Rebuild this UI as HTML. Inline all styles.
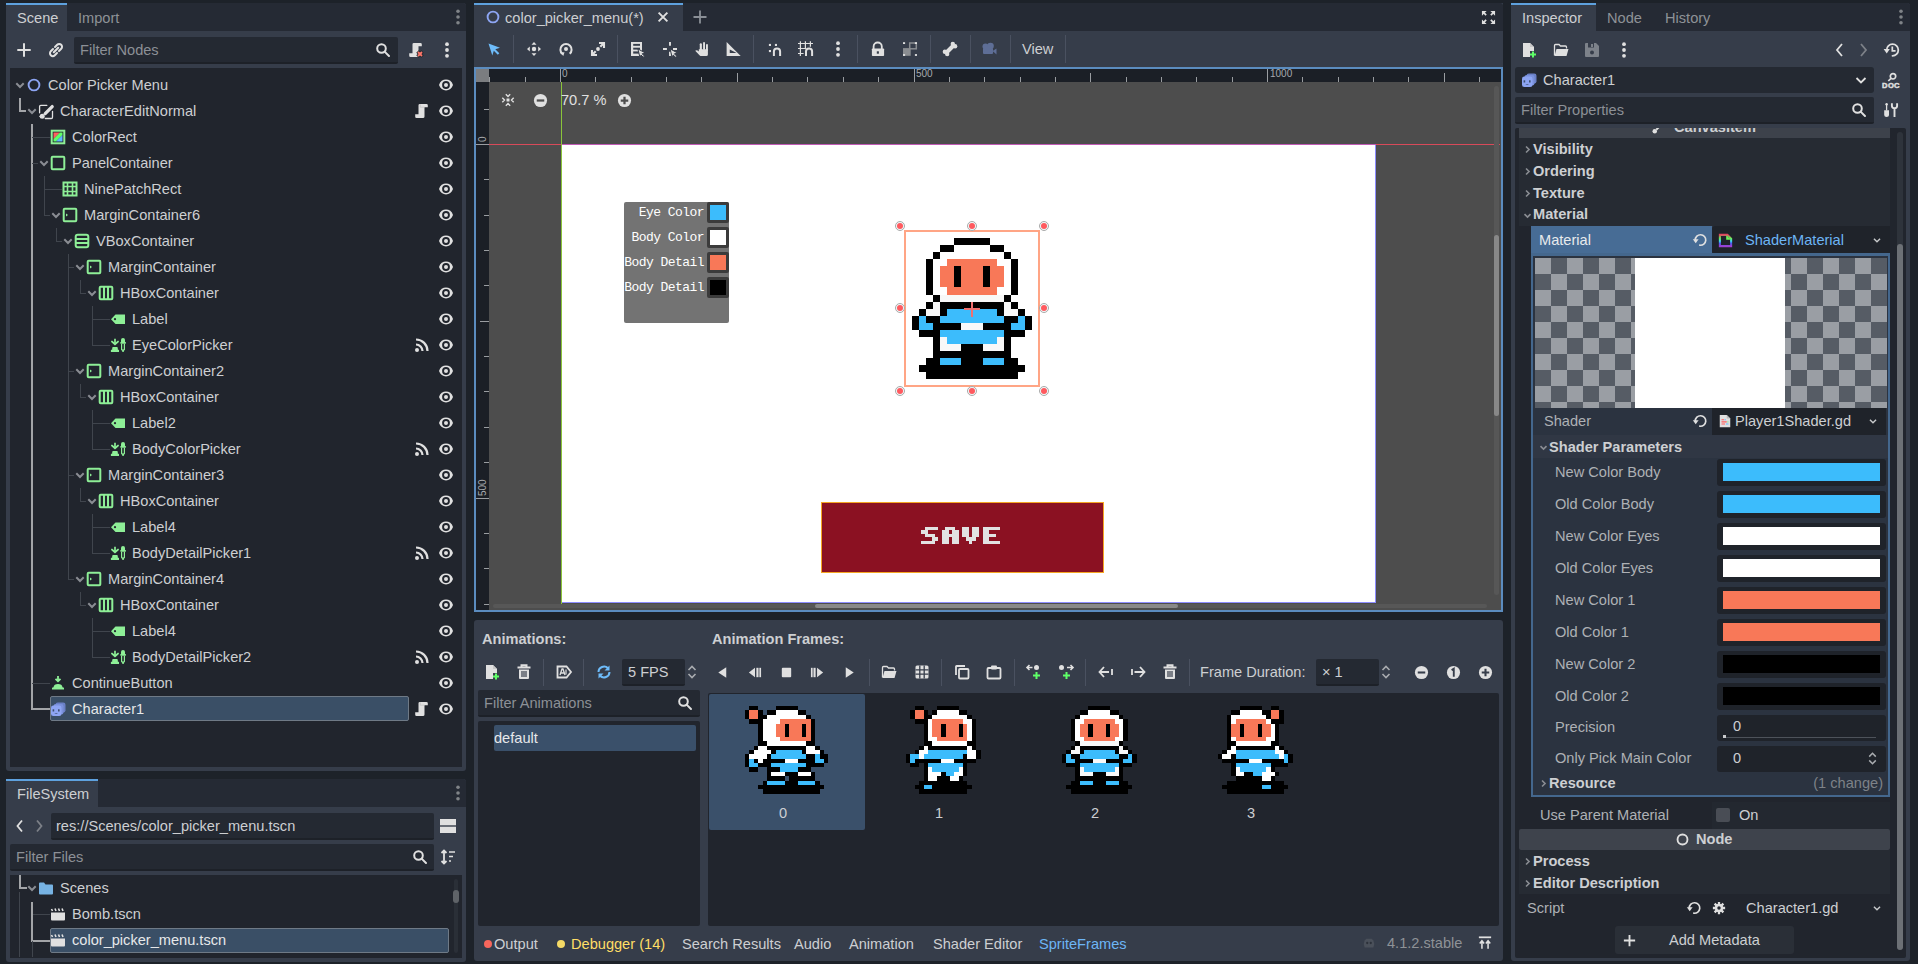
<!DOCTYPE html>
<html><head><meta charset="utf-8"><style>
html,body{margin:0;padding:0;}
body{width:1918px;height:964px;overflow:hidden;background:#1d2229;position:relative;font-family:"Liberation Sans", sans-serif;}
.a{position:absolute;}
.t{white-space:nowrap;}
svg{overflow:visible;}
</style></head><body>
<div class="a" style="left:6px;top:3px;width:460px;height:768px;background:#363d4a;border-radius:3px;"></div><div class="a" style="left:6px;top:3px;width:460px;height:28px;background:#252a34;border-radius:3px 3px 0 0;"></div><div class="a" style="left:6px;top:3px;width:61px;height:28px;background:#363d4a;"></div><div class="a" style="left:6px;top:3px;width:61px;height:2px;background:#5ea1de;"></div><div class="a t" style="top:8.0px;height:20px;line-height:20px;font-size:14.6px;color:#cdcfd2;left:17px;">Scene</div><div class="a t" style="top:8.0px;height:20px;line-height:20px;font-size:14.6px;color:#8e9297;left:78px;">Import</div><div class="a" style="left:10px;top:68px;width:452px;height:699px;background:#21252d;"></div><div class="a" style="left:6px;top:779px;width:460px;height:183px;background:#363d4a;border-radius:3px;"></div><div class="a" style="left:6px;top:779px;width:460px;height:28px;background:#252a34;border-radius:3px 3px 0 0;"></div><div class="a" style="left:6px;top:779px;width:92px;height:28px;background:#363d4a;"></div><div class="a" style="left:6px;top:779px;width:92px;height:2px;background:#5ea1de;"></div><div class="a t" style="top:784.0px;height:20px;line-height:20px;font-size:14.6px;color:#cdcfd2;left:17px;">FileSystem</div><div class="a" style="left:10px;top:875px;width:452px;height:83px;background:#21252d;"></div><div class="a" style="left:474px;top:3px;width:1029px;height:64px;background:#363d4a;"></div><div class="a" style="left:474px;top:3px;width:1029px;height:28px;background:#252a34;border-radius:3px 3px 0 0;"></div><div class="a" style="left:474px;top:3px;width:209px;height:28px;background:#363d4a;"></div><div class="a" style="left:474px;top:3px;width:209px;height:2px;background:#5ea1de;"></div><div class="a t" style="top:8.0px;height:20px;line-height:20px;font-size:14.6px;color:#cdcfd2;left:505px;">color_picker_menu(*)</div><div class="a" style="left:474px;top:67px;width:1029px;height:545px;background:#4f5e73;"></div><div class="a" style="left:476px;top:69px;width:1025px;height:541px;background:#4d4d4d;"></div><div class="a" style="left:474px;top:620px;width:1029px;height:341px;background:#363d4a;border-radius:3px;"></div><div class="a" style="left:1511px;top:3px;width:399px;height:958px;background:#363d4a;border-radius:3px;"></div><div class="a" style="left:1511px;top:3px;width:399px;height:28px;background:#252a34;border-radius:3px 3px 0 0;"></div><div class="a" style="left:1511px;top:3px;width:85px;height:28px;background:#363d4a;"></div><div class="a" style="left:1511px;top:3px;width:85px;height:2px;background:#5ea1de;"></div><div class="a t" style="top:8.0px;height:20px;line-height:20px;font-size:14.6px;color:#cdcfd2;left:1522px;">Inspector</div><div class="a t" style="top:8.0px;height:20px;line-height:20px;font-size:14.6px;color:#8e9297;left:1607px;">Node</div><div class="a t" style="top:8.0px;height:20px;line-height:20px;font-size:14.6px;color:#8e9297;left:1665px;">History</div><div class="a" style="left:50px;top:696px;width:359px;height:25px;background:#3a4f66;border:1px solid #6f7a86;box-sizing:border-box;border-radius:2px;"></div><div class="a" style="left:19px;top:98px;width:2px;height:14px;background:#a3a5a8;"></div><div class="a" style="left:20px;top:110px;width:6px;height:2px;background:#a3a5a8;"></div><div class="a" style="left:31px;top:124px;width:2px;height:586px;background:#a3a5a8;"></div><div class="a" style="left:32px;top:137px;width:18px;height:1px;background:#40454d;"></div><div class="a" style="left:32px;top:163px;width:6px;height:1px;background:#40454d;"></div><div class="a" style="left:32px;top:683px;width:18px;height:1px;background:#40454d;"></div><div class="a" style="left:32px;top:708px;width:18px;height:2px;background:#a3a5a8;"></div><div class="a" style="left:44px;top:176px;width:1px;height:40px;background:#40454d;"></div><div class="a" style="left:44px;top:189px;width:18px;height:1px;background:#40454d;"></div><div class="a" style="left:44px;top:215px;width:6px;height:1px;background:#40454d;"></div><div class="a" style="left:56px;top:228px;width:1px;height:14px;background:#40454d;"></div><div class="a" style="left:56px;top:241px;width:6px;height:1px;background:#40454d;"></div><div class="a" style="left:68px;top:254px;width:1px;height:326px;background:#40454d;"></div><div class="a" style="left:68px;top:267px;width:6px;height:1px;background:#40454d;"></div><div class="a" style="left:68px;top:371px;width:6px;height:1px;background:#40454d;"></div><div class="a" style="left:68px;top:475px;width:6px;height:1px;background:#40454d;"></div><div class="a" style="left:68px;top:579px;width:6px;height:1px;background:#40454d;"></div><div class="a" style="left:80px;top:280px;width:1px;height:14px;background:#40454d;"></div><div class="a" style="left:80px;top:293px;width:6px;height:1px;background:#40454d;"></div><div class="a" style="left:92px;top:306px;width:1px;height:40px;background:#40454d;"></div><div class="a" style="left:92px;top:319px;width:18px;height:1px;background:#40454d;"></div><div class="a" style="left:92px;top:345px;width:18px;height:1px;background:#40454d;"></div><div class="a" style="left:80px;top:384px;width:1px;height:14px;background:#40454d;"></div><div class="a" style="left:80px;top:397px;width:6px;height:1px;background:#40454d;"></div><div class="a" style="left:92px;top:410px;width:1px;height:40px;background:#40454d;"></div><div class="a" style="left:92px;top:423px;width:18px;height:1px;background:#40454d;"></div><div class="a" style="left:92px;top:449px;width:18px;height:1px;background:#40454d;"></div><div class="a" style="left:80px;top:488px;width:1px;height:14px;background:#40454d;"></div><div class="a" style="left:80px;top:501px;width:6px;height:1px;background:#40454d;"></div><div class="a" style="left:92px;top:514px;width:1px;height:40px;background:#40454d;"></div><div class="a" style="left:92px;top:527px;width:18px;height:1px;background:#40454d;"></div><div class="a" style="left:92px;top:553px;width:18px;height:1px;background:#40454d;"></div><div class="a" style="left:80px;top:592px;width:1px;height:14px;background:#40454d;"></div><div class="a" style="left:80px;top:605px;width:6px;height:1px;background:#40454d;"></div><div class="a" style="left:92px;top:618px;width:1px;height:40px;background:#40454d;"></div><div class="a" style="left:92px;top:631px;width:18px;height:1px;background:#40454d;"></div><div class="a" style="left:92px;top:657px;width:18px;height:1px;background:#40454d;"></div><svg class="a" style="left:12.0px;top:77.0px;" width="16" height="16" viewBox="0 0 16 16"><path d="M4.3 6.3L8 10L11.7 6.3" fill="none" stroke="#8a8d93" stroke-width="2"/></svg><svg class="a" style="left:26.0px;top:77.0px;" width="16" height="16" viewBox="0 0 16 16"><circle cx="8" cy="8" r="5.4" fill="none" stroke="#8da5f3" stroke-width="1.9"/></svg><div class="a t" style="top:75.0px;height:20px;line-height:20px;font-size:14.6px;color:#cdcfd2;left:48px;">Color Picker Menu</div><svg class="a" style="left:438.0px;top:77.0px;" width="16" height="16" viewBox="0 0 16 16"><path d="M1 8C3 0.8 13 0.8 15 8C13 15.2 3 15.2 1 8Z" fill="#e0e0e0"/><circle cx="8" cy="8" r="3.9" fill="#21252d"/><circle cx="8" cy="8" r="2" fill="#e0e0e0"/></svg><svg class="a" style="left:24.0px;top:103.0px;" width="16" height="16" viewBox="0 0 16 16"><path d="M4.3 6.3L8 10L11.7 6.3" fill="none" stroke="#8a8d93" stroke-width="2"/></svg><svg class="a" style="left:38.0px;top:103.0px;" width="16" height="16" viewBox="0 0 16 16"><g fill="none" stroke="#e0e0e0" stroke-width="1.3" stroke-linecap="round"><path d="M1.6 9.8V3.6Q1.6 2.4 2.8 2.4H8.8M14.5 8.3V14.3Q14.5 15.5 13.3 15.5H7.3"/></g><path d="M14.2 3.6L7.2 10.6" stroke="#e0e0e0" stroke-width="3.3" stroke-linecap="round"/><circle cx="4.2" cy="13.2" r="2.5" fill="#e0e0e0"/><path d="M1 13.5L3 12L3.5 15Z" fill="#e0e0e0"/></svg><div class="a t" style="top:101.0px;height:20px;line-height:20px;font-size:14.6px;color:#cdcfd2;left:60px;">CharacterEditNormal</div><svg class="a" style="left:438.0px;top:103.0px;" width="16" height="16" viewBox="0 0 16 16"><path d="M1 8C3 0.8 13 0.8 15 8C13 15.2 3 15.2 1 8Z" fill="#e0e0e0"/><circle cx="8" cy="8" r="3.9" fill="#21252d"/><circle cx="8" cy="8" r="2" fill="#e0e0e0"/></svg><svg class="a" style="left:414.0px;top:103.0px;" width="16" height="16" viewBox="0 0 16 16"><path d="M4.5 2.2Q4.5 1 5.8 1H12.5Q13.8 1 13.8 2.3V4.2H10.5V13.5Q10.5 15 9 15H2.5Q1.2 15 1.2 13.7V11.3H4.5Z" fill="#e0e0e0"/><path d="M6.3 1.3V4.2H10.3" fill="none" stroke="#b8b8b8" stroke-width="0.6"/></svg><svg class="a" style="left:50.0px;top:129.0px;" width="16" height="16" viewBox="0 0 16 16"><rect x="1.7" y="1.7" width="12.6" height="12.6" fill="none" stroke="#8eef97" stroke-width="2"/><path d="M3.5 3.5H10L3.5 10Z" fill="#ff5f5f"/><path d="M10 3.5H12.5V6L6 12.5H3.5V10Z" fill="#5fff68"/><path d="M12.5 6V12.5H6Z" fill="#5fb8ff"/></svg><div class="a t" style="top:127.0px;height:20px;line-height:20px;font-size:14.6px;color:#cdcfd2;left:72px;">ColorRect</div><svg class="a" style="left:438.0px;top:129.0px;" width="16" height="16" viewBox="0 0 16 16"><path d="M1 8C3 0.8 13 0.8 15 8C13 15.2 3 15.2 1 8Z" fill="#e0e0e0"/><circle cx="8" cy="8" r="3.9" fill="#21252d"/><circle cx="8" cy="8" r="2" fill="#e0e0e0"/></svg><svg class="a" style="left:36.0px;top:155.0px;" width="16" height="16" viewBox="0 0 16 16"><path d="M4.3 6.3L8 10L11.7 6.3" fill="none" stroke="#8a8d93" stroke-width="2"/></svg><svg class="a" style="left:50.0px;top:155.0px;" width="16" height="16" viewBox="0 0 16 16"><rect x="1.7" y="1.7" width="12.6" height="12.6" rx="1" fill="none" stroke="#8eef97" stroke-width="2"/></svg><div class="a t" style="top:153.0px;height:20px;line-height:20px;font-size:14.6px;color:#cdcfd2;left:72px;">PanelContainer</div><svg class="a" style="left:438.0px;top:155.0px;" width="16" height="16" viewBox="0 0 16 16"><path d="M1 8C3 0.8 13 0.8 15 8C13 15.2 3 15.2 1 8Z" fill="#e0e0e0"/><circle cx="8" cy="8" r="3.9" fill="#21252d"/><circle cx="8" cy="8" r="2" fill="#e0e0e0"/></svg><svg class="a" style="left:62.0px;top:181.0px;" width="16" height="16" viewBox="0 0 16 16"><rect x="1.5" y="1.5" width="13" height="13" fill="none" stroke="#8eef97" stroke-width="2"/><path d="M5.5 1.5V14.5M10.5 1.5V14.5M1.5 5.5H14.5M1.5 10.5H14.5" stroke="#8eef97" stroke-width="1.6"/></svg><div class="a t" style="top:179.0px;height:20px;line-height:20px;font-size:14.6px;color:#cdcfd2;left:84px;">NinePatchRect</div><svg class="a" style="left:438.0px;top:181.0px;" width="16" height="16" viewBox="0 0 16 16"><path d="M1 8C3 0.8 13 0.8 15 8C13 15.2 3 15.2 1 8Z" fill="#e0e0e0"/><circle cx="8" cy="8" r="3.9" fill="#21252d"/><circle cx="8" cy="8" r="2" fill="#e0e0e0"/></svg><svg class="a" style="left:48.0px;top:207.0px;" width="16" height="16" viewBox="0 0 16 16"><path d="M4.3 6.3L8 10L11.7 6.3" fill="none" stroke="#8a8d93" stroke-width="2"/></svg><svg class="a" style="left:62.0px;top:207.0px;" width="16" height="16" viewBox="0 0 16 16"><rect x="1.7" y="1.7" width="12.6" height="12.6" rx="1" fill="none" stroke="#8eef97" stroke-width="2"/><path d="M4 6.5L6 8L4 9.5Z" fill="#8eef97"/></svg><div class="a t" style="top:205.0px;height:20px;line-height:20px;font-size:14.6px;color:#cdcfd2;left:84px;">MarginContainer6</div><svg class="a" style="left:438.0px;top:207.0px;" width="16" height="16" viewBox="0 0 16 16"><path d="M1 8C3 0.8 13 0.8 15 8C13 15.2 3 15.2 1 8Z" fill="#e0e0e0"/><circle cx="8" cy="8" r="3.9" fill="#21252d"/><circle cx="8" cy="8" r="2" fill="#e0e0e0"/></svg><svg class="a" style="left:60.0px;top:233.0px;" width="16" height="16" viewBox="0 0 16 16"><path d="M4.3 6.3L8 10L11.7 6.3" fill="none" stroke="#8a8d93" stroke-width="2"/></svg><svg class="a" style="left:74.0px;top:233.0px;" width="16" height="16" viewBox="0 0 16 16"><rect x="1.7" y="1.7" width="12.6" height="12.6" rx="2" fill="none" stroke="#8eef97" stroke-width="2"/><path d="M1.7 6H14.3M1.7 10H14.3" stroke="#8eef97" stroke-width="2"/></svg><div class="a t" style="top:231.0px;height:20px;line-height:20px;font-size:14.6px;color:#cdcfd2;left:96px;">VBoxContainer</div><svg class="a" style="left:438.0px;top:233.0px;" width="16" height="16" viewBox="0 0 16 16"><path d="M1 8C3 0.8 13 0.8 15 8C13 15.2 3 15.2 1 8Z" fill="#e0e0e0"/><circle cx="8" cy="8" r="3.9" fill="#21252d"/><circle cx="8" cy="8" r="2" fill="#e0e0e0"/></svg><svg class="a" style="left:72.0px;top:259.0px;" width="16" height="16" viewBox="0 0 16 16"><path d="M4.3 6.3L8 10L11.7 6.3" fill="none" stroke="#8a8d93" stroke-width="2"/></svg><svg class="a" style="left:86.0px;top:259.0px;" width="16" height="16" viewBox="0 0 16 16"><rect x="1.7" y="1.7" width="12.6" height="12.6" rx="1" fill="none" stroke="#8eef97" stroke-width="2"/><path d="M4 6.5L6 8L4 9.5Z" fill="#8eef97"/></svg><div class="a t" style="top:257.0px;height:20px;line-height:20px;font-size:14.6px;color:#cdcfd2;left:108px;">MarginContainer</div><svg class="a" style="left:438.0px;top:259.0px;" width="16" height="16" viewBox="0 0 16 16"><path d="M1 8C3 0.8 13 0.8 15 8C13 15.2 3 15.2 1 8Z" fill="#e0e0e0"/><circle cx="8" cy="8" r="3.9" fill="#21252d"/><circle cx="8" cy="8" r="2" fill="#e0e0e0"/></svg><svg class="a" style="left:84.0px;top:285.0px;" width="16" height="16" viewBox="0 0 16 16"><path d="M4.3 6.3L8 10L11.7 6.3" fill="none" stroke="#8a8d93" stroke-width="2"/></svg><svg class="a" style="left:98.0px;top:285.0px;" width="16" height="16" viewBox="0 0 16 16"><rect x="1.7" y="1.7" width="12.6" height="12.6" rx="1" fill="none" stroke="#8eef97" stroke-width="2"/><path d="M6 1.7V14.3M10 1.7V14.3" stroke="#8eef97" stroke-width="2"/></svg><div class="a t" style="top:283.0px;height:20px;line-height:20px;font-size:14.6px;color:#cdcfd2;left:120px;">HBoxContainer</div><svg class="a" style="left:438.0px;top:285.0px;" width="16" height="16" viewBox="0 0 16 16"><path d="M1 8C3 0.8 13 0.8 15 8C13 15.2 3 15.2 1 8Z" fill="#e0e0e0"/><circle cx="8" cy="8" r="3.9" fill="#21252d"/><circle cx="8" cy="8" r="2" fill="#e0e0e0"/></svg><svg class="a" style="left:110.0px;top:311.0px;" width="16" height="16" viewBox="0 0 16 16"><path d="M5.5 3.5H15V13H5.5L1 8.3Z" fill="#8eef97"/><circle cx="5" cy="8.2" r="1.1" fill="#21252d"/></svg><div class="a t" style="top:309.0px;height:20px;line-height:20px;font-size:14.6px;color:#cdcfd2;left:132px;">Label</div><svg class="a" style="left:438.0px;top:311.0px;" width="16" height="16" viewBox="0 0 16 16"><path d="M1 8C3 0.8 13 0.8 15 8C13 15.2 3 15.2 1 8Z" fill="#e0e0e0"/><circle cx="8" cy="8" r="3.9" fill="#21252d"/><circle cx="8" cy="8" r="2" fill="#e0e0e0"/></svg><svg class="a" style="left:110.0px;top:337.0px;" width="16" height="16" viewBox="0 0 16 16"><path d="M5 1.7V6.5" stroke="#8eef97" stroke-width="1.7"/><path d="M2 4.6L5 7.3L8 4.6" fill="none" stroke="#8eef97" stroke-width="1.9" stroke-linecap="round"/><path d="M0.9 15H9V13.1L7.8 12.6V11Q7.8 10 6.8 10H3.2Q2.2 10 2.2 11V12.6L0.9 13.1Z" fill="#8eef97"/><path d="M11 5.3V3Q11 0.9 13 0.9Q15 0.9 15 3V5.3Z" fill="#8eef97"/><rect x="10.2" y="5" width="5.8" height="1.7" rx="0.8" fill="#8eef97"/><path d="M11.6 6.7V12.4L12.3 13.2H13.7L14.4 12.4V6.7" fill="none" stroke="#8eef97" stroke-width="1.2"/><rect x="12.2" y="12.8" width="1.7" height="2.1" fill="#8eef97"/></svg><div class="a t" style="top:335.0px;height:20px;line-height:20px;font-size:14.6px;color:#cdcfd2;left:132px;">EyeColorPicker</div><svg class="a" style="left:438.0px;top:337.0px;" width="16" height="16" viewBox="0 0 16 16"><path d="M1 8C3 0.8 13 0.8 15 8C13 15.2 3 15.2 1 8Z" fill="#e0e0e0"/><circle cx="8" cy="8" r="3.9" fill="#21252d"/><circle cx="8" cy="8" r="2" fill="#e0e0e0"/></svg><svg class="a" style="left:414.0px;top:337.0px;" width="16" height="16" viewBox="0 0 16 16"><circle cx="3" cy="13" r="2" fill="#e0e0e0"/><path d="M2 7.5A6.5 6.5 0 0 1 8.5 14M2 2.5A11.5 11.5 0 0 1 13.5 14" fill="none" stroke="#e0e0e0" stroke-width="2.2"/></svg><svg class="a" style="left:72.0px;top:363.0px;" width="16" height="16" viewBox="0 0 16 16"><path d="M4.3 6.3L8 10L11.7 6.3" fill="none" stroke="#8a8d93" stroke-width="2"/></svg><svg class="a" style="left:86.0px;top:363.0px;" width="16" height="16" viewBox="0 0 16 16"><rect x="1.7" y="1.7" width="12.6" height="12.6" rx="1" fill="none" stroke="#8eef97" stroke-width="2"/><path d="M4 6.5L6 8L4 9.5Z" fill="#8eef97"/></svg><div class="a t" style="top:361.0px;height:20px;line-height:20px;font-size:14.6px;color:#cdcfd2;left:108px;">MarginContainer2</div><svg class="a" style="left:438.0px;top:363.0px;" width="16" height="16" viewBox="0 0 16 16"><path d="M1 8C3 0.8 13 0.8 15 8C13 15.2 3 15.2 1 8Z" fill="#e0e0e0"/><circle cx="8" cy="8" r="3.9" fill="#21252d"/><circle cx="8" cy="8" r="2" fill="#e0e0e0"/></svg><svg class="a" style="left:84.0px;top:389.0px;" width="16" height="16" viewBox="0 0 16 16"><path d="M4.3 6.3L8 10L11.7 6.3" fill="none" stroke="#8a8d93" stroke-width="2"/></svg><svg class="a" style="left:98.0px;top:389.0px;" width="16" height="16" viewBox="0 0 16 16"><rect x="1.7" y="1.7" width="12.6" height="12.6" rx="1" fill="none" stroke="#8eef97" stroke-width="2"/><path d="M6 1.7V14.3M10 1.7V14.3" stroke="#8eef97" stroke-width="2"/></svg><div class="a t" style="top:387.0px;height:20px;line-height:20px;font-size:14.6px;color:#cdcfd2;left:120px;">HBoxContainer</div><svg class="a" style="left:438.0px;top:389.0px;" width="16" height="16" viewBox="0 0 16 16"><path d="M1 8C3 0.8 13 0.8 15 8C13 15.2 3 15.2 1 8Z" fill="#e0e0e0"/><circle cx="8" cy="8" r="3.9" fill="#21252d"/><circle cx="8" cy="8" r="2" fill="#e0e0e0"/></svg><svg class="a" style="left:110.0px;top:415.0px;" width="16" height="16" viewBox="0 0 16 16"><path d="M5.5 3.5H15V13H5.5L1 8.3Z" fill="#8eef97"/><circle cx="5" cy="8.2" r="1.1" fill="#21252d"/></svg><div class="a t" style="top:413.0px;height:20px;line-height:20px;font-size:14.6px;color:#cdcfd2;left:132px;">Label2</div><svg class="a" style="left:438.0px;top:415.0px;" width="16" height="16" viewBox="0 0 16 16"><path d="M1 8C3 0.8 13 0.8 15 8C13 15.2 3 15.2 1 8Z" fill="#e0e0e0"/><circle cx="8" cy="8" r="3.9" fill="#21252d"/><circle cx="8" cy="8" r="2" fill="#e0e0e0"/></svg><svg class="a" style="left:110.0px;top:441.0px;" width="16" height="16" viewBox="0 0 16 16"><path d="M5 1.7V6.5" stroke="#8eef97" stroke-width="1.7"/><path d="M2 4.6L5 7.3L8 4.6" fill="none" stroke="#8eef97" stroke-width="1.9" stroke-linecap="round"/><path d="M0.9 15H9V13.1L7.8 12.6V11Q7.8 10 6.8 10H3.2Q2.2 10 2.2 11V12.6L0.9 13.1Z" fill="#8eef97"/><path d="M11 5.3V3Q11 0.9 13 0.9Q15 0.9 15 3V5.3Z" fill="#8eef97"/><rect x="10.2" y="5" width="5.8" height="1.7" rx="0.8" fill="#8eef97"/><path d="M11.6 6.7V12.4L12.3 13.2H13.7L14.4 12.4V6.7" fill="none" stroke="#8eef97" stroke-width="1.2"/><rect x="12.2" y="12.8" width="1.7" height="2.1" fill="#8eef97"/></svg><div class="a t" style="top:439.0px;height:20px;line-height:20px;font-size:14.6px;color:#cdcfd2;left:132px;">BodyColorPicker</div><svg class="a" style="left:438.0px;top:441.0px;" width="16" height="16" viewBox="0 0 16 16"><path d="M1 8C3 0.8 13 0.8 15 8C13 15.2 3 15.2 1 8Z" fill="#e0e0e0"/><circle cx="8" cy="8" r="3.9" fill="#21252d"/><circle cx="8" cy="8" r="2" fill="#e0e0e0"/></svg><svg class="a" style="left:414.0px;top:441.0px;" width="16" height="16" viewBox="0 0 16 16"><circle cx="3" cy="13" r="2" fill="#e0e0e0"/><path d="M2 7.5A6.5 6.5 0 0 1 8.5 14M2 2.5A11.5 11.5 0 0 1 13.5 14" fill="none" stroke="#e0e0e0" stroke-width="2.2"/></svg><svg class="a" style="left:72.0px;top:467.0px;" width="16" height="16" viewBox="0 0 16 16"><path d="M4.3 6.3L8 10L11.7 6.3" fill="none" stroke="#8a8d93" stroke-width="2"/></svg><svg class="a" style="left:86.0px;top:467.0px;" width="16" height="16" viewBox="0 0 16 16"><rect x="1.7" y="1.7" width="12.6" height="12.6" rx="1" fill="none" stroke="#8eef97" stroke-width="2"/><path d="M4 6.5L6 8L4 9.5Z" fill="#8eef97"/></svg><div class="a t" style="top:465.0px;height:20px;line-height:20px;font-size:14.6px;color:#cdcfd2;left:108px;">MarginContainer3</div><svg class="a" style="left:438.0px;top:467.0px;" width="16" height="16" viewBox="0 0 16 16"><path d="M1 8C3 0.8 13 0.8 15 8C13 15.2 3 15.2 1 8Z" fill="#e0e0e0"/><circle cx="8" cy="8" r="3.9" fill="#21252d"/><circle cx="8" cy="8" r="2" fill="#e0e0e0"/></svg><svg class="a" style="left:84.0px;top:493.0px;" width="16" height="16" viewBox="0 0 16 16"><path d="M4.3 6.3L8 10L11.7 6.3" fill="none" stroke="#8a8d93" stroke-width="2"/></svg><svg class="a" style="left:98.0px;top:493.0px;" width="16" height="16" viewBox="0 0 16 16"><rect x="1.7" y="1.7" width="12.6" height="12.6" rx="1" fill="none" stroke="#8eef97" stroke-width="2"/><path d="M6 1.7V14.3M10 1.7V14.3" stroke="#8eef97" stroke-width="2"/></svg><div class="a t" style="top:491.0px;height:20px;line-height:20px;font-size:14.6px;color:#cdcfd2;left:120px;">HBoxContainer</div><svg class="a" style="left:438.0px;top:493.0px;" width="16" height="16" viewBox="0 0 16 16"><path d="M1 8C3 0.8 13 0.8 15 8C13 15.2 3 15.2 1 8Z" fill="#e0e0e0"/><circle cx="8" cy="8" r="3.9" fill="#21252d"/><circle cx="8" cy="8" r="2" fill="#e0e0e0"/></svg><svg class="a" style="left:110.0px;top:519.0px;" width="16" height="16" viewBox="0 0 16 16"><path d="M5.5 3.5H15V13H5.5L1 8.3Z" fill="#8eef97"/><circle cx="5" cy="8.2" r="1.1" fill="#21252d"/></svg><div class="a t" style="top:517.0px;height:20px;line-height:20px;font-size:14.6px;color:#cdcfd2;left:132px;">Label4</div><svg class="a" style="left:438.0px;top:519.0px;" width="16" height="16" viewBox="0 0 16 16"><path d="M1 8C3 0.8 13 0.8 15 8C13 15.2 3 15.2 1 8Z" fill="#e0e0e0"/><circle cx="8" cy="8" r="3.9" fill="#21252d"/><circle cx="8" cy="8" r="2" fill="#e0e0e0"/></svg><svg class="a" style="left:110.0px;top:545.0px;" width="16" height="16" viewBox="0 0 16 16"><path d="M5 1.7V6.5" stroke="#8eef97" stroke-width="1.7"/><path d="M2 4.6L5 7.3L8 4.6" fill="none" stroke="#8eef97" stroke-width="1.9" stroke-linecap="round"/><path d="M0.9 15H9V13.1L7.8 12.6V11Q7.8 10 6.8 10H3.2Q2.2 10 2.2 11V12.6L0.9 13.1Z" fill="#8eef97"/><path d="M11 5.3V3Q11 0.9 13 0.9Q15 0.9 15 3V5.3Z" fill="#8eef97"/><rect x="10.2" y="5" width="5.8" height="1.7" rx="0.8" fill="#8eef97"/><path d="M11.6 6.7V12.4L12.3 13.2H13.7L14.4 12.4V6.7" fill="none" stroke="#8eef97" stroke-width="1.2"/><rect x="12.2" y="12.8" width="1.7" height="2.1" fill="#8eef97"/></svg><div class="a t" style="top:543.0px;height:20px;line-height:20px;font-size:14.6px;color:#cdcfd2;left:132px;">BodyDetailPicker1</div><svg class="a" style="left:438.0px;top:545.0px;" width="16" height="16" viewBox="0 0 16 16"><path d="M1 8C3 0.8 13 0.8 15 8C13 15.2 3 15.2 1 8Z" fill="#e0e0e0"/><circle cx="8" cy="8" r="3.9" fill="#21252d"/><circle cx="8" cy="8" r="2" fill="#e0e0e0"/></svg><svg class="a" style="left:414.0px;top:545.0px;" width="16" height="16" viewBox="0 0 16 16"><circle cx="3" cy="13" r="2" fill="#e0e0e0"/><path d="M2 7.5A6.5 6.5 0 0 1 8.5 14M2 2.5A11.5 11.5 0 0 1 13.5 14" fill="none" stroke="#e0e0e0" stroke-width="2.2"/></svg><svg class="a" style="left:72.0px;top:571.0px;" width="16" height="16" viewBox="0 0 16 16"><path d="M4.3 6.3L8 10L11.7 6.3" fill="none" stroke="#8a8d93" stroke-width="2"/></svg><svg class="a" style="left:86.0px;top:571.0px;" width="16" height="16" viewBox="0 0 16 16"><rect x="1.7" y="1.7" width="12.6" height="12.6" rx="1" fill="none" stroke="#8eef97" stroke-width="2"/><path d="M4 6.5L6 8L4 9.5Z" fill="#8eef97"/></svg><div class="a t" style="top:569.0px;height:20px;line-height:20px;font-size:14.6px;color:#cdcfd2;left:108px;">MarginContainer4</div><svg class="a" style="left:438.0px;top:571.0px;" width="16" height="16" viewBox="0 0 16 16"><path d="M1 8C3 0.8 13 0.8 15 8C13 15.2 3 15.2 1 8Z" fill="#e0e0e0"/><circle cx="8" cy="8" r="3.9" fill="#21252d"/><circle cx="8" cy="8" r="2" fill="#e0e0e0"/></svg><svg class="a" style="left:84.0px;top:597.0px;" width="16" height="16" viewBox="0 0 16 16"><path d="M4.3 6.3L8 10L11.7 6.3" fill="none" stroke="#8a8d93" stroke-width="2"/></svg><svg class="a" style="left:98.0px;top:597.0px;" width="16" height="16" viewBox="0 0 16 16"><rect x="1.7" y="1.7" width="12.6" height="12.6" rx="1" fill="none" stroke="#8eef97" stroke-width="2"/><path d="M6 1.7V14.3M10 1.7V14.3" stroke="#8eef97" stroke-width="2"/></svg><div class="a t" style="top:595.0px;height:20px;line-height:20px;font-size:14.6px;color:#cdcfd2;left:120px;">HBoxContainer</div><svg class="a" style="left:438.0px;top:597.0px;" width="16" height="16" viewBox="0 0 16 16"><path d="M1 8C3 0.8 13 0.8 15 8C13 15.2 3 15.2 1 8Z" fill="#e0e0e0"/><circle cx="8" cy="8" r="3.9" fill="#21252d"/><circle cx="8" cy="8" r="2" fill="#e0e0e0"/></svg><svg class="a" style="left:110.0px;top:623.0px;" width="16" height="16" viewBox="0 0 16 16"><path d="M5.5 3.5H15V13H5.5L1 8.3Z" fill="#8eef97"/><circle cx="5" cy="8.2" r="1.1" fill="#21252d"/></svg><div class="a t" style="top:621.0px;height:20px;line-height:20px;font-size:14.6px;color:#cdcfd2;left:132px;">Label4</div><svg class="a" style="left:438.0px;top:623.0px;" width="16" height="16" viewBox="0 0 16 16"><path d="M1 8C3 0.8 13 0.8 15 8C13 15.2 3 15.2 1 8Z" fill="#e0e0e0"/><circle cx="8" cy="8" r="3.9" fill="#21252d"/><circle cx="8" cy="8" r="2" fill="#e0e0e0"/></svg><svg class="a" style="left:110.0px;top:649.0px;" width="16" height="16" viewBox="0 0 16 16"><path d="M5 1.7V6.5" stroke="#8eef97" stroke-width="1.7"/><path d="M2 4.6L5 7.3L8 4.6" fill="none" stroke="#8eef97" stroke-width="1.9" stroke-linecap="round"/><path d="M0.9 15H9V13.1L7.8 12.6V11Q7.8 10 6.8 10H3.2Q2.2 10 2.2 11V12.6L0.9 13.1Z" fill="#8eef97"/><path d="M11 5.3V3Q11 0.9 13 0.9Q15 0.9 15 3V5.3Z" fill="#8eef97"/><rect x="10.2" y="5" width="5.8" height="1.7" rx="0.8" fill="#8eef97"/><path d="M11.6 6.7V12.4L12.3 13.2H13.7L14.4 12.4V6.7" fill="none" stroke="#8eef97" stroke-width="1.2"/><rect x="12.2" y="12.8" width="1.7" height="2.1" fill="#8eef97"/></svg><div class="a t" style="top:647.0px;height:20px;line-height:20px;font-size:14.6px;color:#cdcfd2;left:132px;">BodyDetailPicker2</div><svg class="a" style="left:438.0px;top:649.0px;" width="16" height="16" viewBox="0 0 16 16"><path d="M1 8C3 0.8 13 0.8 15 8C13 15.2 3 15.2 1 8Z" fill="#e0e0e0"/><circle cx="8" cy="8" r="3.9" fill="#21252d"/><circle cx="8" cy="8" r="2" fill="#e0e0e0"/></svg><svg class="a" style="left:414.0px;top:649.0px;" width="16" height="16" viewBox="0 0 16 16"><circle cx="3" cy="13" r="2" fill="#e0e0e0"/><path d="M2 7.5A6.5 6.5 0 0 1 8.5 14M2 2.5A11.5 11.5 0 0 1 13.5 14" fill="none" stroke="#e0e0e0" stroke-width="2.2"/></svg><svg class="a" style="left:50.0px;top:675.0px;" width="16" height="16" viewBox="0 0 16 16"><path d="M8 1V6M5.5 3.8L8 6.3L10.5 3.8" fill="none" stroke="#8eef97" stroke-width="1.8"/><path d="M2 14.5H14V12.8L12.5 12.3Q12 9 8 9Q4 9 3.5 12.3L2 12.8Z" fill="#8eef97"/></svg><div class="a t" style="top:673.0px;height:20px;line-height:20px;font-size:14.6px;color:#cdcfd2;left:72px;">ContinueButton</div><svg class="a" style="left:438.0px;top:675.0px;" width="16" height="16" viewBox="0 0 16 16"><path d="M1 8C3 0.8 13 0.8 15 8C13 15.2 3 15.2 1 8Z" fill="#e0e0e0"/><circle cx="8" cy="8" r="3.9" fill="#21252d"/><circle cx="8" cy="8" r="2" fill="#e0e0e0"/></svg><svg class="a" style="left:50.0px;top:701.0px;" width="16" height="16" viewBox="0 0 16 16"><rect x="5.5" y="1.5" width="10" height="10" rx="2.3" fill="#6a80c6"/><rect x="3.5" y="3" width="10" height="10.5" rx="2.3" fill="#7a91dc"/><rect x="1" y="4.5" width="10.5" height="10.5" rx="2.3" fill="#8da5f3"/><rect x="2.6" y="8.3" width="1.6" height="2.2" fill="#3d4f6e"/><rect x="8" y="8.3" width="1.6" height="2.2" fill="#3d4f6e"/><path d="M4.3 12Q6.2 13.6 8 12Z" fill="#3d4f6e"/></svg><div class="a t" style="top:699.0px;height:20px;line-height:20px;font-size:14.6px;color:#e6e8ea;left:72px;">Character1</div><svg class="a" style="left:438.0px;top:701.0px;" width="16" height="16" viewBox="0 0 16 16"><path d="M1 8C3 0.8 13 0.8 15 8C13 15.2 3 15.2 1 8Z" fill="#e0e0e0"/><circle cx="8" cy="8" r="3.9" fill="#21252d"/><circle cx="8" cy="8" r="2" fill="#e0e0e0"/></svg><svg class="a" style="left:414.0px;top:701.0px;" width="16" height="16" viewBox="0 0 16 16"><path d="M4.5 2.2Q4.5 1 5.8 1H12.5Q13.8 1 13.8 2.3V4.2H10.5V13.5Q10.5 15 9 15H2.5Q1.2 15 1.2 13.7V11.3H4.5Z" fill="#e0e0e0"/><path d="M6.3 1.3V4.2H10.3" fill="none" stroke="#b8b8b8" stroke-width="0.6"/></svg><svg class="a" style="left:450.0px;top:9.0px;" width="16" height="16" viewBox="0 0 16 16"><circle cx="8" cy="2.2" r="1.8" fill="#808488"/><circle cx="8" cy="8" r="1.8" fill="#808488"/><circle cx="8" cy="13.8" r="1.8" fill="#808488"/></svg><svg class="a" style="left:16.0px;top:42.0px;" width="16" height="16" viewBox="0 0 16 16"><path d="M8 1.3V14.7M1.3 8H14.7" stroke="#e0e0e0" stroke-width="2"/></svg><svg class="a" style="left:48.0px;top:42.0px;" width="16" height="16" viewBox="0 0 16 16"><path d="M9.2 2.8A2.8 2.8 0 0 1 13.2 6.8L11 9M7 5L9.2 2.8M6.8 13.2A2.8 2.8 0 0 1 2.8 9.2L5 7M9 11L6.8 13.2M5.8 10.2L10.2 5.8" fill="none" stroke="#e0e0e0" stroke-width="2" stroke-linecap="round"/></svg><div class="a" style="left:74px;top:37px;width:324px;height:27px;background:#242932;border-radius:2px;border-bottom:2px solid #1d2128;box-sizing:border-box;"></div><div class="a t" style="top:40.0px;height:20px;line-height:20px;font-size:14.6px;color:#8c9096;left:80px;">Filter Nodes</div><svg class="a" style="left:375.0px;top:42.0px;" width="16" height="16" viewBox="0 0 16 16"><circle cx="6.5" cy="6.5" r="4.3" fill="none" stroke="#e0e0e0" stroke-width="2"/><path d="M9.6 9.6L14 14" stroke="#e0e0e0" stroke-width="2" stroke-linecap="round"/></svg><svg class="a" style="left:408.0px;top:42.0px;" width="16" height="16" viewBox="0 0 16 16"><path d="M4.5 2.2Q4.5 1 5.8 1H12.5Q13.8 1 13.8 2.3V4.2H10.5V13.5Q10.5 15 9 15H2.5Q1.2 15 1.2 13.7V11.3H4.5Z" fill="#e0e0e0"/><path d="M9.5 9.5L14.5 14.5M14.5 9.5L9.5 14.5" stroke="#21252d" stroke-width="3.5"/><path d="M10 10L14 14M14 10L10 14" stroke="#ff786b" stroke-width="1.8"/></svg><svg class="a" style="left:439.0px;top:42.0px;" width="16" height="16" viewBox="0 0 16 16"><circle cx="8" cy="2.2" r="1.9" fill="#e0e0e0"/><circle cx="8" cy="8" r="1.9" fill="#e0e0e0"/><circle cx="8" cy="13.8" r="1.9" fill="#e0e0e0"/></svg><svg class="a" style="left:450.0px;top:785.0px;" width="16" height="16" viewBox="0 0 16 16"><circle cx="8" cy="2.2" r="1.8" fill="#808488"/><circle cx="8" cy="8" r="1.8" fill="#808488"/><circle cx="8" cy="13.8" r="1.8" fill="#808488"/></svg><svg class="a" style="left:12.0px;top:818.0px;" width="16" height="16" viewBox="0 0 16 16"><path d="M10 2.5L5.5 8L10 13.5" fill="none" stroke="#e0e0e0" stroke-width="1.8"/></svg><svg class="a" style="left:31.0px;top:818.0px;" width="16" height="16" viewBox="0 0 16 16"><path d="M6 2.5L10.5 8L6 13.5" fill="none" stroke="#7d8188" stroke-width="1.8"/></svg><div class="a" style="left:51px;top:813px;width:383px;height:27px;background:#242932;border-radius:2px;border-bottom:2px solid #1d2128;box-sizing:border-box;"></div><div class="a t" style="top:816.0px;height:20px;line-height:20px;font-size:14.6px;color:#cdcfd2;left:56px;">res://Scenes/color_picker_menu.tscn</div><svg class="a" style="left:440.0px;top:818.0px;" width="16" height="16" viewBox="0 0 16 16"><rect x="0" y="1" width="16" height="6.3" fill="#e0e0e0"/><rect x="0" y="8.7" width="16" height="6.3" fill="#e0e0e0"/></svg><div class="a" style="left:10px;top:844px;width:424px;height:27px;background:#242932;border-radius:2px;border-bottom:2px solid #1d2128;box-sizing:border-box;"></div><div class="a t" style="top:847.0px;height:20px;line-height:20px;font-size:14.6px;color:#8c9096;left:16px;">Filter Files</div><svg class="a" style="left:412.0px;top:849.0px;" width="16" height="16" viewBox="0 0 16 16"><circle cx="6.5" cy="6.5" r="4.3" fill="none" stroke="#e0e0e0" stroke-width="2"/><path d="M9.6 9.6L14 14" stroke="#e0e0e0" stroke-width="2" stroke-linecap="round"/></svg><svg class="a" style="left:440.0px;top:849.0px;" width="16" height="16" viewBox="0 0 16 16"><path d="M4 1.5V14.5M1.5 4L4 1.5L6.5 4M1.5 12L4 14.5L6.5 12" fill="none" stroke="#e0e0e0" stroke-width="1.8"/><path d="M9 3H15M9 7.5H13M9 12H11" stroke="#e0e0e0" stroke-width="1.6"/></svg><div class="a" style="left:50px;top:928px;width:399px;height:25px;background:#3a4f66;border:1px solid #6f7a86;box-sizing:border-box;border-radius:2px;"></div><div class="a" style="left:19px;top:875px;width:2px;height:13px;background:#a3a5a8;"></div><div class="a" style="left:19px;top:887px;width:8px;height:2px;background:#a3a5a8;"></div><div class="a" style="left:19px;top:892px;width:1px;height:65px;background:#40454d;"></div><div class="a" style="left:31px;top:902px;width:2px;height:39px;background:#a3a5a8;"></div><div class="a" style="left:31px;top:940px;width:19px;height:2px;background:#a3a5a8;"></div><div class="a" style="left:32px;top:941px;width:1px;height:16px;background:#40454d;"></div><div class="a" style="left:33px;top:914px;width:17px;height:1px;background:#40454d;"></div><svg class="a" style="left:24.0px;top:880.0px;" width="16" height="16" viewBox="0 0 16 16"><path d="M4.3 6.3L8 10L11.7 6.3" fill="none" stroke="#8a8d93" stroke-width="2"/></svg><svg class="a" style="left:38.0px;top:880.0px;" width="16" height="16" viewBox="0 0 16 16"><path d="M1 3.5Q1 2.5 2 2.5H6L7.5 4.5H14Q15 4.5 15 5.5V13.5Q15 14.5 14 14.5H2Q1 14.5 1 13.5Z" fill="#77b3e3"/></svg><div class="a t" style="top:878.0px;height:20px;line-height:20px;font-size:14.6px;color:#cdcfd2;left:60px;">Scenes</div><svg class="a" style="left:50.0px;top:906.0px;" width="16" height="16" viewBox="0 0 16 16"><path d="M1 6.5H15V13.5Q15 14.5 14 14.5H2Q1 14.5 1 13.5Z" fill="#e0e0e0"/><path d="M1.5 3L2.5 5M5 2.5L6 5M8.5 2.5L9.5 5M12 2.5L13 5" stroke="#e0e0e0" stroke-width="1.6"/></svg><div class="a t" style="top:904.0px;height:20px;line-height:20px;font-size:14.6px;color:#cdcfd2;left:72px;">Bomb.tscn</div><svg class="a" style="left:50.0px;top:932.0px;" width="16" height="16" viewBox="0 0 16 16"><path d="M1 6.5H15V13.5Q15 14.5 14 14.5H2Q1 14.5 1 13.5Z" fill="#e0e0e0"/><path d="M1.5 3L2.5 5M5 2.5L6 5M8.5 2.5L9.5 5M12 2.5L13 5" stroke="#e0e0e0" stroke-width="1.6"/></svg><div class="a t" style="top:930.0px;height:20px;line-height:20px;font-size:14.6px;color:#e6e8ea;left:72px;">color_picker_menu.tscn</div><div class="a" style="left:454px;top:879px;width:4px;height:74px;background:#2a2f37;border-radius:2px;"></div><div class="a" style="left:453px;top:890px;width:6px;height:13px;background:#5f6368;border-radius:3px;"></div><svg class="a" style="left:485.0px;top:9.0px;" width="16" height="16" viewBox="0 0 16 16"><circle cx="8" cy="8" r="5.4" fill="none" stroke="#8da5f3" stroke-width="1.9"/></svg><svg class="a" style="left:656.0px;top:10.0px;" width="14" height="14" viewBox="0 0 16 16"><path d="M3 3L13 13M13 3L3 13" stroke="#e0e0e0" stroke-width="2.2"/></svg><svg class="a" style="left:692.0px;top:9.0px;" width="16" height="16" viewBox="0 0 16 16"><path d="M8 1.5V14.5M1.5 8H14.5" stroke="#8a8f96" stroke-width="1.8"/></svg><svg class="a" style="left:1480.5px;top:9.5px;" width="15" height="15" viewBox="0 0 16 16"><path d="M1.5 1.5L5.5 5.5M14.5 1.5L10.5 5.5M1.5 14.5L5.5 10.5M14.5 14.5L10.5 10.5" stroke="#e0e0e0" stroke-width="1.8"/><path d="M1 1H6L1 6ZM15 1V6L10 1ZM1 15V10L6 15ZM15 15H10L15 10Z" fill="#e0e0e0"/></svg><svg class="a" style="left:486.0px;top:41.0px;" width="16" height="16" viewBox="0 0 16 16"><path d="M2.5 2.5L14 6.8L9.3 8.3L13.3 12.3L11.8 13.8L7.8 9.8L6.3 14.5Z" fill="#6ebcfa"/></svg><div class="a" style="left:513px;top:35px;width:1px;height:28px;background:#4a5160;"></div><svg class="a" style="left:526.0px;top:41.0px;" width="16" height="16" viewBox="0 0 16 16"><path d="M8 1L10.5 3.8H5.5ZM8 15L5.5 12.2H10.5ZM1 8L3.8 5.5V10.5ZM15 8L12.2 10.5V5.5Z" fill="#e0e0e0"/><circle cx="8" cy="8" r="2.2" fill="#e0e0e0"/></svg><svg class="a" style="left:558.0px;top:41.0px;" width="16" height="16" viewBox="0 0 16 16"><path d="M4.3 12.8A5.6 5.6 0 1 1 11.7 12.8" fill="none" stroke="#e0e0e0" stroke-width="2"/><path d="M2 11.5L6.5 11.2L5.3 15Z" fill="#e0e0e0"/><circle cx="8" cy="8" r="2" fill="#e0e0e0"/></svg><svg class="a" style="left:590.0px;top:41.0px;" width="16" height="16" viewBox="0 0 16 16"><path d="M9 2H14V7M14 2L10.3 5.7M7 14H2V9M2 14L5.7 10.3" fill="none" stroke="#e0e0e0" stroke-width="2.1"/><circle cx="8" cy="8" r="1.9" fill="#e0e0e0"/></svg><div class="a" style="left:617px;top:35px;width:1px;height:28px;background:#4a5160;"></div><svg class="a" style="left:629.0px;top:41.0px;" width="16" height="16" viewBox="0 0 16 16"><rect x="2" y="1" width="11" height="14" fill="#e0e0e0"/><rect x="4.2" y="2.9" width="6.8" height="1.9" fill="#363d4a"/><rect x="4.2" y="6.7" width="6.8" height="1.9" fill="#363d4a"/><rect x="4.2" y="10.4" width="6.8" height="2.2" fill="#363d4a"/><path d="M8.9 7.9L16.1 11.8L13.2 12.8L15.4 15.0L14.2 16.200000000000003L12.0 14.0L11.0 16.700000000000003Z" fill="#e0e0e0" stroke="#363d4a" stroke-width="1"/></svg><svg class="a" style="left:662.0px;top:41.0px;" width="16" height="16" viewBox="0 0 16 16"><path d="M8 1V4.8M1 8H4.9M11 8H15M8 10.8V15" stroke="#e0e0e0" stroke-width="1.9"/><path d="M8.1 7.9L15.3 11.8L12.399999999999999 12.8L14.6 15.0L13.399999999999999 16.200000000000003L11.2 14.0L10.2 16.700000000000003Z" fill="#e0e0e0" stroke="#363d4a" stroke-width="1"/></svg><svg class="a" style="left:694.0px;top:41.0px;" width="16" height="16" viewBox="0 0 16 16"><path d="M4.8 8.3H13.9V13.5Q13.9 15.1 12.3 15.1H7.5Q6.3 15.1 5.5 14.2L1.2 9.8Q2.3 8.8 3.6 9.6L4.8 10.6Z" fill="#e0e0e0"/><rect x="5.75" y="2.3" width="2.15" height="8" rx="1" fill="#e0e0e0"/><rect x="9.1" y="1" width="1.9" height="8" rx="0.95" fill="#e0e0e0"/><rect x="12" y="2.9" width="1.9" height="7" rx="0.95" fill="#e0e0e0"/></svg><svg class="a" style="left:725.0px;top:41.0px;" width="16" height="16" viewBox="0 0 16 16"><path d="M1.6 1V15.1H15.7Z" fill="#e0e0e0"/><path d="M4.75 8.6V12H11.6Z" fill="#363d4a"/></svg><div class="a" style="left:753px;top:35px;width:1px;height:28px;background:#4a5160;"></div><svg class="a" style="left:767.0px;top:41.0px;" width="16" height="16" viewBox="0 0 16 16"><path d="M6.9 15V10.5A3.1 3.1 0 0 1 13.1 10.5V15" fill="none" stroke="#e0e0e0" stroke-width="2"/><rect x="1.9" y="2.9" width="2.1" height="2.1" fill="#e0e0e0"/><rect x="7.9" y="2.9" width="2.1" height="2.1" fill="#e0e0e0"/><rect x="1.9" y="9" width="2.1" height="2.1" fill="#e0e0e0"/></svg><svg class="a" style="left:798.0px;top:41.0px;" width="16" height="16" viewBox="0 0 16 16"><path d="M2.4 0.2V15M7.4 0.2V7.5H0M12.4 0.2V5.8M0 2.5H15M0 12.5H5.6" fill="none" stroke="#e0e0e0" stroke-width="1.2"/><path d="M8 15V10.6A3.05 3.05 0 0 1 14.1 10.6V15" fill="none" stroke="#e0e0e0" stroke-width="2"/></svg><svg class="a" style="left:830.0px;top:41.0px;" width="16" height="16" viewBox="0 0 16 16"><circle cx="8" cy="2.2" r="1.9" fill="#e0e0e0"/><circle cx="8" cy="8" r="1.9" fill="#e0e0e0"/><circle cx="8" cy="13.8" r="1.9" fill="#e0e0e0"/></svg><div class="a" style="left:857px;top:35px;width:1px;height:28px;background:#4a5160;"></div><svg class="a" style="left:869.0px;top:41.0px;" width="16" height="16" viewBox="0 0 16 16"><path d="M4.6 8V5.6A4.1 4.1 0 0 1 12.8 5.6V8" fill="none" stroke="#e0e0e0" stroke-width="1.8"/><rect x="2.9" y="7.5" width="12.2" height="7.5" rx="0.8" fill="#e0e0e0"/><rect x="7.8" y="10.3" width="2.1" height="2.4" fill="#363d4a"/></svg><svg class="a" style="left:902.0px;top:41.0px;" width="16" height="16" viewBox="0 0 16 16"><rect x="7.7" y="2" width="6.6" height="5.8" fill="none" stroke="#8a8d91" stroke-width="1.5"/><rect x="1" y="7.1" width="7.7" height="7.7" fill="#8a8d91"/><rect x="1" y="1.2" width="2.1" height="1.8" fill="#e0e0e0"/><rect x="12.9" y="1.2" width="2.1" height="1.8" fill="#e0e0e0"/><rect x="1" y="13.1" width="2.1" height="1.8" fill="#e0e0e0"/><rect x="12.9" y="13.1" width="2.1" height="1.8" fill="#e0e0e0"/></svg><div class="a" style="left:930px;top:35px;width:1px;height:28px;background:#4a5160;"></div><svg class="a" style="left:942.0px;top:41.0px;" width="16" height="16" viewBox="0 0 16 16"><path d="M4 12L12 4" stroke="#e0e0e0" stroke-width="4"/><circle cx="2.9" cy="10.8" r="2.2" fill="#e0e0e0"/><circle cx="5.2" cy="13.1" r="2.2" fill="#e0e0e0"/><circle cx="10.8" cy="2.9" r="2.2" fill="#e0e0e0"/><circle cx="13.1" cy="5.2" r="2.2" fill="#e0e0e0"/></svg><div class="a" style="left:970px;top:35px;width:1px;height:28px;background:#4a5160;"></div><svg class="a" style="left:981.0px;top:41.0px;" width="16" height="16" viewBox="0 0 16 16"><circle cx="4.5" cy="5.5" r="3" fill="#5e6e96"/><circle cx="9.5" cy="5" r="3.3" fill="#5e6e96"/><rect x="2" y="7" width="10" height="6" rx="1" fill="#5e6e96"/><path d="M11.5 10L15.5 7.5V13.5Z" fill="#5e6e96"/></svg><div class="a" style="left:1010px;top:35px;width:1px;height:28px;background:#4a5160;"></div><div class="a t" style="top:39.0px;height:20px;line-height:20px;font-size:14.6px;color:#cdcfd2;left:1022px;">View</div><div class="a" style="left:1065px;top:35px;width:1px;height:28px;background:#4a5160;"></div><div class="a" style="left:474px;top:67px;width:1029px;height:545px;background:#5b8cbf;"></div><div class="a" style="left:476px;top:69px;width:1025px;height:541px;background:#4d4d4d;"></div><div class="a" style="left:476px;top:69px;width:1025px;height:13px;background:#1b1f26;"></div><div class="a" style="left:476px;top:69px;width:13px;height:541px;background:#1b1f26;"></div><div class="a" style="left:476px;top:69px;width:13px;height:13px;background:#7b7d80;"></div><div class="a" style="left:489px;top:77px;width:1px;height:5px;background:#9a9da1;"></div><div class="a" style="left:525px;top:77px;width:1px;height:5px;background:#9a9da1;"></div><div class="a" style="left:560px;top:69px;width:1px;height:13px;background:#9a9da1;"></div><div class="a" style="left:595px;top:77px;width:1px;height:5px;background:#9a9da1;"></div><div class="a" style="left:631px;top:77px;width:1px;height:5px;background:#9a9da1;"></div><div class="a" style="left:666px;top:77px;width:1px;height:5px;background:#9a9da1;"></div><div class="a" style="left:701px;top:77px;width:1px;height:5px;background:#9a9da1;"></div><div class="a" style="left:737px;top:73px;width:1px;height:9px;background:#9a9da1;"></div><div class="a" style="left:772px;top:77px;width:1px;height:5px;background:#9a9da1;"></div><div class="a" style="left:807px;top:77px;width:1px;height:5px;background:#9a9da1;"></div><div class="a" style="left:843px;top:77px;width:1px;height:5px;background:#9a9da1;"></div><div class="a" style="left:878px;top:77px;width:1px;height:5px;background:#9a9da1;"></div><div class="a" style="left:914px;top:69px;width:1px;height:13px;background:#9a9da1;"></div><div class="a" style="left:949px;top:77px;width:1px;height:5px;background:#9a9da1;"></div><div class="a" style="left:984px;top:77px;width:1px;height:5px;background:#9a9da1;"></div><div class="a" style="left:1020px;top:77px;width:1px;height:5px;background:#9a9da1;"></div><div class="a" style="left:1055px;top:77px;width:1px;height:5px;background:#9a9da1;"></div><div class="a" style="left:1090px;top:73px;width:1px;height:9px;background:#9a9da1;"></div><div class="a" style="left:1126px;top:77px;width:1px;height:5px;background:#9a9da1;"></div><div class="a" style="left:1161px;top:77px;width:1px;height:5px;background:#9a9da1;"></div><div class="a" style="left:1196px;top:77px;width:1px;height:5px;background:#9a9da1;"></div><div class="a" style="left:1232px;top:77px;width:1px;height:5px;background:#9a9da1;"></div><div class="a" style="left:1267px;top:69px;width:1px;height:13px;background:#9a9da1;"></div><div class="a" style="left:1302px;top:77px;width:1px;height:5px;background:#9a9da1;"></div><div class="a" style="left:1338px;top:77px;width:1px;height:5px;background:#9a9da1;"></div><div class="a" style="left:1373px;top:77px;width:1px;height:5px;background:#9a9da1;"></div><div class="a" style="left:1408px;top:77px;width:1px;height:5px;background:#9a9da1;"></div><div class="a" style="left:1444px;top:73px;width:1px;height:9px;background:#9a9da1;"></div><div class="a" style="left:1479px;top:77px;width:1px;height:5px;background:#9a9da1;"></div><div class="a t" style="left:562px;top:68px;font-size:10px;line-height:12px;color:#a6a9ad;">0</div><div class="a t" style="left:916px;top:68px;font-size:10px;line-height:12px;color:#a6a9ad;">500</div><div class="a t" style="left:1270px;top:68px;font-size:10px;line-height:12px;color:#a6a9ad;">1000</div><div class="a" style="left:484px;top:109px;width:5px;height:1px;background:#9a9da1;"></div><div class="a" style="left:476px;top:144px;width:13px;height:1px;background:#9a9da1;"></div><div class="a" style="left:484px;top:179px;width:5px;height:1px;background:#9a9da1;"></div><div class="a" style="left:484px;top:215px;width:5px;height:1px;background:#9a9da1;"></div><div class="a" style="left:484px;top:250px;width:5px;height:1px;background:#9a9da1;"></div><div class="a" style="left:484px;top:285px;width:5px;height:1px;background:#9a9da1;"></div><div class="a" style="left:480px;top:321px;width:9px;height:1px;background:#9a9da1;"></div><div class="a" style="left:484px;top:356px;width:5px;height:1px;background:#9a9da1;"></div><div class="a" style="left:484px;top:391px;width:5px;height:1px;background:#9a9da1;"></div><div class="a" style="left:484px;top:427px;width:5px;height:1px;background:#9a9da1;"></div><div class="a" style="left:484px;top:462px;width:5px;height:1px;background:#9a9da1;"></div><div class="a" style="left:476px;top:498px;width:13px;height:1px;background:#9a9da1;"></div><div class="a" style="left:484px;top:533px;width:5px;height:1px;background:#9a9da1;"></div><div class="a" style="left:484px;top:568px;width:5px;height:1px;background:#9a9da1;"></div><div class="a" style="left:484px;top:604px;width:5px;height:1px;background:#9a9da1;"></div><div class="a t" style="left:477px;top:142px;font-size:10px;line-height:12px;color:#a6a9ad;transform-origin:0 0;transform:rotate(-90deg);">0</div><div class="a t" style="left:477px;top:496px;font-size:10px;line-height:12px;color:#a6a9ad;transform-origin:0 0;transform:rotate(-90deg);">500</div><div class="a" style="left:561px;top:145px;width:815px;height:458px;background:#ffffff;"></div><div class="a" style="left:1375px;top:145px;width:1px;height:458px;background:#8c8cff;"></div><div class="a" style="left:561px;top:602px;width:815px;height:1px;background:#8c8cff;"></div><div class="a" style="left:489px;top:144px;width:1011px;height:1px;background:#d84a5a;"></div><div class="a" style="left:561px;top:144px;width:815px;height:1px;background:#c05bb5;"></div><div class="a" style="left:561px;top:82px;width:1px;height:526px;background:#8ac43a;"></div><div class="a" style="left:1494px;top:86px;width:5px;height:509px;background:#575757;border-radius:3px;"></div><div class="a" style="left:1494px;top:235px;width:5px;height:181px;background:#888888;border-radius:3px;"></div><div class="a" style="left:493px;top:604px;width:994px;height:4px;background:#575757;border-radius:2px;"></div><div class="a" style="left:815px;top:604px;width:363px;height:4px;background:#888888;border-radius:2px;"></div><svg class="a" style="left:501.0px;top:93.0px;" width="14" height="14" viewBox="0 0 16 16"><path d="M5.5 1.5L8 4L10.5 1.5M5.5 14.5L8 12L10.5 14.5M1.5 5.5L4 8L1.5 10.5M14.5 5.5L12 8L14.5 10.5" fill="none" stroke="#e0e0e0" stroke-width="1.6"/><rect x="6.3" y="6.3" width="3.4" height="3.4" fill="#e0e0e0"/></svg><svg class="a" style="left:532.5px;top:92.5px;" width="15" height="15" viewBox="0 0 16 16"><circle cx="8" cy="8" r="7" fill="#e0e0e0"/><path d="M4 8H12" stroke="#4d4d4d" stroke-width="2.4"/></svg><div class="a t" style="top:90.0px;height:20px;line-height:20px;font-size:14.6px;color:#e0e0e0;left:561px;">70.7 %</div><svg class="a" style="left:616.5px;top:92.5px;" width="15" height="15" viewBox="0 0 16 16"><circle cx="8" cy="8" r="7" fill="#e0e0e0"/><path d="M4 8H12M8 4V12" stroke="#4d4d4d" stroke-width="2.4"/></svg><div class="a" style="left:624px;top:202px;width:105px;height:121px;background:#737373;border-radius:2px;"></div><div class="a" style="left:707px;top:202px;width:22px;height:21px;background:#3b3b3b;border-radius:2px;"></div><div class="a" style="left:710px;top:205px;width:16px;height:15px;background:#3cbcfc;"></div><div class="a t" style="right:1214px;top:203px;height:20px;line-height:20px;font-family:'Liberation Mono',monospace;font-size:13px;color:#ffffff;letter-spacing:-0.55px;">Eye Color</div><div class="a" style="left:707px;top:227px;width:22px;height:21px;background:#3b3b3b;border-radius:2px;"></div><div class="a" style="left:710px;top:230px;width:16px;height:15px;background:#ffffff;"></div><div class="a t" style="right:1214px;top:228px;height:20px;line-height:20px;font-family:'Liberation Mono',monospace;font-size:13px;color:#ffffff;letter-spacing:-0.55px;">Body Color</div><div class="a" style="left:707px;top:252px;width:22px;height:21px;background:#3b3b3b;border-radius:2px;"></div><div class="a" style="left:710px;top:255px;width:16px;height:15px;background:#f87858;"></div><div class="a t" style="right:1214px;top:253px;height:20px;line-height:20px;font-family:'Liberation Mono',monospace;font-size:13px;color:#ffffff;letter-spacing:-0.55px;">Body Detail</div><div class="a" style="left:707px;top:277px;width:22px;height:21px;background:#3b3b3b;border-radius:2px;"></div><div class="a" style="left:710px;top:280px;width:16px;height:15px;background:#000000;"></div><div class="a t" style="right:1214px;top:278px;height:20px;line-height:20px;font-family:'Liberation Mono',monospace;font-size:13px;color:#ffffff;letter-spacing:-0.55px;">Body Detail</div><svg class="a" style="left:912px;top:238px;shape-rendering:crispEdges;" width="120.19" height="141.4" viewBox="0 0 17 20"><rect x="6" y="0" width="5" height="1" fill="#000000"/><rect x="4" y="1" width="2" height="1" fill="#000000"/><rect x="6" y="1" width="5" height="1" fill="#ffffff"/><rect x="11" y="1" width="2" height="1" fill="#000000"/><rect x="3" y="2" width="1" height="1" fill="#000000"/><rect x="4" y="2" width="9" height="1" fill="#ffffff"/><rect x="13" y="2" width="1" height="1" fill="#000000"/><rect x="2" y="3" width="1" height="1" fill="#000000"/><rect x="3" y="3" width="2" height="1" fill="#ffffff"/><rect x="5" y="3" width="7" height="1" fill="#f87858"/><rect x="12" y="3" width="2" height="1" fill="#ffffff"/><rect x="14" y="3" width="1" height="1" fill="#000000"/><rect x="2" y="4" width="1" height="1" fill="#000000"/><rect x="3" y="4" width="1" height="1" fill="#ffffff"/><rect x="4" y="4" width="2" height="1" fill="#f87858"/><rect x="6" y="4" width="1" height="1" fill="#000000"/><rect x="7" y="4" width="3" height="1" fill="#f87858"/><rect x="10" y="4" width="1" height="1" fill="#000000"/><rect x="11" y="4" width="2" height="1" fill="#f87858"/><rect x="13" y="4" width="1" height="1" fill="#ffffff"/><rect x="14" y="4" width="1" height="1" fill="#000000"/><rect x="2" y="5" width="1" height="1" fill="#000000"/><rect x="3" y="5" width="1" height="1" fill="#ffffff"/><rect x="4" y="5" width="2" height="1" fill="#f87858"/><rect x="6" y="5" width="1" height="1" fill="#000000"/><rect x="7" y="5" width="3" height="1" fill="#f87858"/><rect x="10" y="5" width="1" height="1" fill="#000000"/><rect x="11" y="5" width="2" height="1" fill="#f87858"/><rect x="13" y="5" width="1" height="1" fill="#ffffff"/><rect x="14" y="5" width="1" height="1" fill="#000000"/><rect x="2" y="6" width="1" height="1" fill="#000000"/><rect x="3" y="6" width="1" height="1" fill="#ffffff"/><rect x="4" y="6" width="2" height="1" fill="#f87858"/><rect x="6" y="6" width="1" height="1" fill="#000000"/><rect x="7" y="6" width="3" height="1" fill="#f87858"/><rect x="10" y="6" width="1" height="1" fill="#000000"/><rect x="11" y="6" width="2" height="1" fill="#f87858"/><rect x="13" y="6" width="1" height="1" fill="#ffffff"/><rect x="14" y="6" width="1" height="1" fill="#000000"/><rect x="2" y="7" width="1" height="1" fill="#000000"/><rect x="3" y="7" width="2" height="1" fill="#ffffff"/><rect x="5" y="7" width="7" height="1" fill="#f87858"/><rect x="12" y="7" width="2" height="1" fill="#ffffff"/><rect x="14" y="7" width="1" height="1" fill="#000000"/><rect x="3" y="8" width="1" height="1" fill="#000000"/><rect x="4" y="8" width="9" height="1" fill="#f8f8f8"/><rect x="13" y="8" width="1" height="1" fill="#000000"/><rect x="2" y="9" width="1" height="1" fill="#000000"/><rect x="3" y="9" width="1" height="1" fill="#f8f8f8"/><rect x="4" y="9" width="9" height="1" fill="#000000"/><rect x="13" y="9" width="1" height="1" fill="#f8f8f8"/><rect x="14" y="9" width="1" height="1" fill="#000000"/><rect x="1" y="10" width="1" height="1" fill="#000000"/><rect x="2" y="10" width="2" height="1" fill="#f8f8f8"/><rect x="4" y="10" width="1" height="1" fill="#000000"/><rect x="5" y="10" width="7" height="1" fill="#3cbcfc"/><rect x="12" y="10" width="1" height="1" fill="#000000"/><rect x="13" y="10" width="2" height="1" fill="#f8f8f8"/><rect x="15" y="10" width="1" height="1" fill="#000000"/><rect x="0" y="11" width="1" height="1" fill="#000000"/><rect x="1" y="11" width="1" height="1" fill="#3cbcfc"/><rect x="2" y="11" width="2" height="1" fill="#000000"/><rect x="4" y="11" width="9" height="1" fill="#3cbcfc"/><rect x="13" y="11" width="2" height="1" fill="#000000"/><rect x="15" y="11" width="1" height="1" fill="#3cbcfc"/><rect x="16" y="11" width="1" height="1" fill="#000000"/><rect x="0" y="12" width="1" height="1" fill="#000000"/><rect x="1" y="12" width="2" height="1" fill="#3cbcfc"/><rect x="3" y="12" width="4" height="1" fill="#000000"/><rect x="7" y="12" width="3" height="1" fill="#f8f8f8"/><rect x="10" y="12" width="4" height="1" fill="#000000"/><rect x="14" y="12" width="2" height="1" fill="#3cbcfc"/><rect x="16" y="12" width="1" height="1" fill="#000000"/><rect x="1" y="13" width="3" height="1" fill="#000000"/><rect x="4" y="13" width="9" height="1" fill="#3cbcfc"/><rect x="13" y="13" width="3" height="1" fill="#000000"/><rect x="3" y="14" width="1" height="1" fill="#000000"/><rect x="4" y="14" width="1" height="1" fill="#f8f8f8"/><rect x="5" y="14" width="7" height="1" fill="#3cbcfc"/><rect x="12" y="14" width="1" height="1" fill="#f8f8f8"/><rect x="13" y="14" width="1" height="1" fill="#000000"/><rect x="3" y="15" width="1" height="1" fill="#000000"/><rect x="4" y="15" width="3" height="1" fill="#f8f8f8"/><rect x="7" y="15" width="3" height="1" fill="#000000"/><rect x="10" y="15" width="3" height="1" fill="#f8f8f8"/><rect x="13" y="15" width="1" height="1" fill="#000000"/><rect x="3" y="16" width="11" height="1" fill="#000000"/><rect x="2" y="17" width="2" height="1" fill="#000000"/><rect x="4" y="17" width="3" height="1" fill="#3cbcfc"/><rect x="7" y="17" width="3" height="1" fill="#000000"/><rect x="10" y="17" width="3" height="1" fill="#3cbcfc"/><rect x="13" y="17" width="2" height="1" fill="#000000"/><rect x="1" y="18" width="15" height="1" fill="#000000"/><rect x="2" y="19" width="13" height="1" fill="#000000"/></svg><div class="a" style="left:904px;top:230px;width:136px;height:157px;border:2px solid #ffa585;box-sizing:border-box;"></div><div class="a" style="left:895px;top:221px;width:10px;height:10px;border-radius:50%;background:#f2fafa;border:1px solid #a9a9a9;box-sizing:border-box;"></div><div class="a" style="left:897px;top:223px;width:6px;height:6px;border-radius:50%;background:#ff5a5f;"></div><div class="a" style="left:895px;top:303px;width:10px;height:10px;border-radius:50%;background:#f2fafa;border:1px solid #a9a9a9;box-sizing:border-box;"></div><div class="a" style="left:897px;top:305px;width:6px;height:6px;border-radius:50%;background:#ff5a5f;"></div><div class="a" style="left:895px;top:386px;width:10px;height:10px;border-radius:50%;background:#f2fafa;border:1px solid #a9a9a9;box-sizing:border-box;"></div><div class="a" style="left:897px;top:388px;width:6px;height:6px;border-radius:50%;background:#ff5a5f;"></div><div class="a" style="left:967px;top:221px;width:10px;height:10px;border-radius:50%;background:#f2fafa;border:1px solid #a9a9a9;box-sizing:border-box;"></div><div class="a" style="left:969px;top:223px;width:6px;height:6px;border-radius:50%;background:#ff5a5f;"></div><div class="a" style="left:967px;top:386px;width:10px;height:10px;border-radius:50%;background:#f2fafa;border:1px solid #a9a9a9;box-sizing:border-box;"></div><div class="a" style="left:969px;top:388px;width:6px;height:6px;border-radius:50%;background:#ff5a5f;"></div><div class="a" style="left:1039px;top:221px;width:10px;height:10px;border-radius:50%;background:#f2fafa;border:1px solid #a9a9a9;box-sizing:border-box;"></div><div class="a" style="left:1041px;top:223px;width:6px;height:6px;border-radius:50%;background:#ff5a5f;"></div><div class="a" style="left:1039px;top:303px;width:10px;height:10px;border-radius:50%;background:#f2fafa;border:1px solid #a9a9a9;box-sizing:border-box;"></div><div class="a" style="left:1041px;top:305px;width:6px;height:6px;border-radius:50%;background:#ff5a5f;"></div><div class="a" style="left:1039px;top:386px;width:10px;height:10px;border-radius:50%;background:#f2fafa;border:1px solid #a9a9a9;box-sizing:border-box;"></div><div class="a" style="left:1041px;top:388px;width:6px;height:6px;border-radius:50%;background:#ff5a5f;"></div><div class="a" style="left:971px;top:302px;width:2px;height:15px;background:#f07070;"></div><div class="a" style="left:964px;top:308px;width:16px;height:2px;background:#f07070;"></div><div class="a" style="left:821px;top:502px;width:283px;height:71px;background:#8b1122;border:1px solid #f5a623;box-sizing:border-box;"></div><svg class="a" style="left:920px;top:527px;shape-rendering:crispEdges;" width="81" height="17" viewBox="0 0 23 5"><rect x="1" y="0" width="1.02" height="1.02" fill="#e2e2e2"/><rect x="2" y="0" width="1.02" height="1.02" fill="#e2e2e2"/><rect x="3" y="0" width="1.02" height="1.02" fill="#e2e2e2"/><rect x="4" y="0" width="1.02" height="1.02" fill="#e2e2e2"/><rect x="0" y="1" width="1.02" height="1.02" fill="#e2e2e2"/><rect x="1" y="1" width="1.02" height="1.02" fill="#e2e2e2"/><rect x="1" y="2" width="1.02" height="1.02" fill="#e2e2e2"/><rect x="2" y="2" width="1.02" height="1.02" fill="#e2e2e2"/><rect x="3" y="2" width="1.02" height="1.02" fill="#e2e2e2"/><rect x="3" y="3" width="1.02" height="1.02" fill="#e2e2e2"/><rect x="4" y="3" width="1.02" height="1.02" fill="#e2e2e2"/><rect x="0" y="4" width="1.02" height="1.02" fill="#e2e2e2"/><rect x="1" y="4" width="1.02" height="1.02" fill="#e2e2e2"/><rect x="2" y="4" width="1.02" height="1.02" fill="#e2e2e2"/><rect x="3" y="4" width="1.02" height="1.02" fill="#e2e2e2"/><rect x="7" y="0" width="1.02" height="1.02" fill="#e2e2e2"/><rect x="8" y="0" width="1.02" height="1.02" fill="#e2e2e2"/><rect x="9" y="0" width="1.02" height="1.02" fill="#e2e2e2"/><rect x="6" y="1" width="1.02" height="1.02" fill="#e2e2e2"/><rect x="7" y="1" width="1.02" height="1.02" fill="#e2e2e2"/><rect x="9" y="1" width="1.02" height="1.02" fill="#e2e2e2"/><rect x="10" y="1" width="1.02" height="1.02" fill="#e2e2e2"/><rect x="6" y="2" width="1.02" height="1.02" fill="#e2e2e2"/><rect x="7" y="2" width="1.02" height="1.02" fill="#e2e2e2"/><rect x="8" y="2" width="1.02" height="1.02" fill="#e2e2e2"/><rect x="9" y="2" width="1.02" height="1.02" fill="#e2e2e2"/><rect x="10" y="2" width="1.02" height="1.02" fill="#e2e2e2"/><rect x="6" y="3" width="1.02" height="1.02" fill="#e2e2e2"/><rect x="7" y="3" width="1.02" height="1.02" fill="#e2e2e2"/><rect x="9" y="3" width="1.02" height="1.02" fill="#e2e2e2"/><rect x="10" y="3" width="1.02" height="1.02" fill="#e2e2e2"/><rect x="6" y="4" width="1.02" height="1.02" fill="#e2e2e2"/><rect x="7" y="4" width="1.02" height="1.02" fill="#e2e2e2"/><rect x="9" y="4" width="1.02" height="1.02" fill="#e2e2e2"/><rect x="10" y="4" width="1.02" height="1.02" fill="#e2e2e2"/><rect x="12" y="0" width="1.02" height="1.02" fill="#e2e2e2"/><rect x="13" y="0" width="1.02" height="1.02" fill="#e2e2e2"/><rect x="15" y="0" width="1.02" height="1.02" fill="#e2e2e2"/><rect x="16" y="0" width="1.02" height="1.02" fill="#e2e2e2"/><rect x="12" y="1" width="1.02" height="1.02" fill="#e2e2e2"/><rect x="13" y="1" width="1.02" height="1.02" fill="#e2e2e2"/><rect x="15" y="1" width="1.02" height="1.02" fill="#e2e2e2"/><rect x="16" y="1" width="1.02" height="1.02" fill="#e2e2e2"/><rect x="12" y="2" width="1.02" height="1.02" fill="#e2e2e2"/><rect x="13" y="2" width="1.02" height="1.02" fill="#e2e2e2"/><rect x="15" y="2" width="1.02" height="1.02" fill="#e2e2e2"/><rect x="16" y="2" width="1.02" height="1.02" fill="#e2e2e2"/><rect x="13" y="3" width="1.02" height="1.02" fill="#e2e2e2"/><rect x="14" y="3" width="1.02" height="1.02" fill="#e2e2e2"/><rect x="15" y="3" width="1.02" height="1.02" fill="#e2e2e2"/><rect x="14" y="4" width="1.02" height="1.02" fill="#e2e2e2"/><rect x="18" y="0" width="1.02" height="1.02" fill="#e2e2e2"/><rect x="19" y="0" width="1.02" height="1.02" fill="#e2e2e2"/><rect x="20" y="0" width="1.02" height="1.02" fill="#e2e2e2"/><rect x="21" y="0" width="1.02" height="1.02" fill="#e2e2e2"/><rect x="22" y="0" width="1.02" height="1.02" fill="#e2e2e2"/><rect x="18" y="1" width="1.02" height="1.02" fill="#e2e2e2"/><rect x="19" y="1" width="1.02" height="1.02" fill="#e2e2e2"/><rect x="18" y="2" width="1.02" height="1.02" fill="#e2e2e2"/><rect x="19" y="2" width="1.02" height="1.02" fill="#e2e2e2"/><rect x="20" y="2" width="1.02" height="1.02" fill="#e2e2e2"/><rect x="21" y="2" width="1.02" height="1.02" fill="#e2e2e2"/><rect x="18" y="3" width="1.02" height="1.02" fill="#e2e2e2"/><rect x="19" y="3" width="1.02" height="1.02" fill="#e2e2e2"/><rect x="18" y="4" width="1.02" height="1.02" fill="#e2e2e2"/><rect x="19" y="4" width="1.02" height="1.02" fill="#e2e2e2"/><rect x="20" y="4" width="1.02" height="1.02" fill="#e2e2e2"/><rect x="21" y="4" width="1.02" height="1.02" fill="#e2e2e2"/><rect x="22" y="4" width="1.02" height="1.02" fill="#e2e2e2"/></svg><div class="a t" style="top:629.0px;height:20px;line-height:20px;font-size:14.6px;color:#cdcfd2;font-weight:bold;left:482px;">Animations:</div><div class="a t" style="top:629.0px;height:20px;line-height:20px;font-size:14.6px;color:#cdcfd2;font-weight:bold;left:712px;">Animation Frames:</div><svg class="a" style="left:484.0px;top:664.0px;" width="16" height="16" viewBox="0 0 16 16"><path d="M2 1H9L13 5V9H9V15H2Z" fill="#e0e0e0"/><path d="M9 1V5H13" fill="#c8c8c8"/><path d="M12 9.5V15.5M9 12.5H15" stroke="#5fff68" stroke-width="2"/></svg><svg class="a" style="left:516.0px;top:664.0px;" width="16" height="16" viewBox="0 0 16 16"><path d="M5.5 2.5V1.2H10.5V2.5M1.5 3.5H14.5" stroke="#e0e0e0" stroke-width="2" fill="none"/><path d="M3 5.5H13V14Q13 15 12 15H4Q3 15 3 14Z" fill="#e0e0e0"/><path d="M6 7V13M8 7V13M10 7V13" stroke="#363d4a" stroke-width="1.2"/></svg><div class="a" style="left:543px;top:659px;width:1px;height:27px;background:#4a5160;"></div><svg class="a" style="left:556.0px;top:664.0px;" width="16" height="16" viewBox="0 0 16 16"><path d="M1.5 2.5H10.5L15 8L10.5 13.5H1.5Z" fill="none" stroke="#e0e0e0" stroke-width="1.8"/><path d="M4 11L6 5H7L9 11M4.8 9H8.2" fill="none" stroke="#e0e0e0" stroke-width="1.3"/><path d="M10 5.5V10.5" stroke="#e0e0e0" stroke-width="1.2"/></svg><div class="a" style="left:583px;top:659px;width:1px;height:27px;background:#4a5160;"></div><svg class="a" style="left:596.0px;top:664.0px;" width="16" height="16" viewBox="0 0 16 16"><path d="M2.5 8A5.5 5.5 0 0 1 12 4.3M13.5 8A5.5 5.5 0 0 1 4 11.7" fill="none" stroke="#6ebcfa" stroke-width="2"/><path d="M13.5 1.5V6.5H8.5ZM2.5 14.5V9.5H7.5Z" fill="#6ebcfa"/></svg><div class="a" style="left:622px;top:659px;width:63px;height:27px;background:#242932;border-radius:2px;border-bottom:2px solid #1d2128;box-sizing:border-box;"></div><div class="a t" style="top:662.0px;height:20px;line-height:20px;font-size:14.6px;color:#cdcfd2;left:628px;">5 FPS</div><svg class="a" style="left:684.0px;top:664.0px;" width="16" height="16" viewBox="0 0 16 16"><path d="M4.5 6L8 2.5L11.5 6M4.5 10L8 13.5L11.5 10" fill="none" stroke="#a9acb0" stroke-width="1.6"/></svg><svg class="a" style="left:714.5px;top:664.5px;" width="15" height="15" viewBox="0 0 16 16"><path d="M12 2.5V13.5L3.5 8Z" fill="#e0e0e0"/></svg><svg class="a" style="left:746.5px;top:664.5px;" width="15" height="15" viewBox="0 0 16 16"><path d="M8.5 3V13L2 8Z" fill="#e0e0e0"/><rect x="10" y="3" width="2.3" height="10" fill="#e0e0e0"/><rect x="13.2" y="3" width="1.8" height="10" fill="#e0e0e0"/></svg><svg class="a" style="left:778.5px;top:664.5px;" width="15" height="15" viewBox="0 0 16 16"><rect x="3" y="3" width="10" height="10" rx="1" fill="#e0e0e0"/></svg><svg class="a" style="left:809.5px;top:664.5px;" width="15" height="15" viewBox="0 0 16 16"><path d="M7.5 3V13L14 8Z" fill="#e0e0e0"/><rect x="1" y="3" width="1.8" height="10" fill="#e0e0e0"/><rect x="3.7" y="3" width="2.3" height="10" fill="#e0e0e0"/></svg><svg class="a" style="left:841.5px;top:664.5px;" width="15" height="15" viewBox="0 0 16 16"><path d="M4 2.5V13.5L12.5 8Z" fill="#e0e0e0"/></svg><div class="a" style="left:869px;top:659px;width:1px;height:27px;background:#4a5160;"></div><svg class="a" style="left:881.0px;top:664.0px;" width="16" height="16" viewBox="0 0 16 16"><path d="M1.5 13.5V3.5Q1.5 2.5 2.5 2.5H6L7.5 4H12.5Q13.5 4 13.5 5V6.5" fill="none" stroke="#e0e0e0" stroke-width="1.3"/><path d="M3.5 7H15.5L13.5 14H1.5Z" fill="#e0e0e0"/></svg><svg class="a" style="left:914.0px;top:664.0px;" width="16" height="16" viewBox="0 0 16 16"><rect x="1.5" y="1.5" width="13" height="13" rx="1.5" fill="#e0e0e0"/><path d="M5.8 1.5V14.5M10.2 1.5V14.5M1.5 5.8H14.5M1.5 10.2H14.5" stroke="#363d4a" stroke-width="1.3"/></svg><div class="a" style="left:941px;top:659px;width:1px;height:27px;background:#4a5160;"></div><svg class="a" style="left:954.0px;top:664.0px;" width="16" height="16" viewBox="0 0 16 16"><path d="M2 11V2.5Q2 2 2.5 2H11" fill="none" stroke="#e0e0e0" stroke-width="1.8"/><rect x="5" y="5" width="9.5" height="9.5" rx="1" fill="none" stroke="#e0e0e0" stroke-width="1.8"/></svg><svg class="a" style="left:986.0px;top:664.0px;" width="16" height="16" viewBox="0 0 16 16"><rect x="1.5" y="4" width="13" height="10.5" rx="1" fill="none" stroke="#e0e0e0" stroke-width="1.8"/><rect x="5" y="1.5" width="6" height="4" rx="1" fill="#e0e0e0"/></svg><div class="a" style="left:1014px;top:659px;width:1px;height:27px;background:#4a5160;"></div><svg class="a" style="left:1026.0px;top:664.0px;" width="16" height="16" viewBox="0 0 16 16"><circle cx="10.5" cy="3.5" r="2.5" fill="#e0e0e0"/><path d="M1 3.5H6.5M3.5 1L1 3.5L3.5 6" fill="none" stroke="#e0e0e0" stroke-width="1.6"/><path d="M10.5 8V15M7 11.5H14" stroke="#5fff68" stroke-width="2"/></svg><svg class="a" style="left:1058.0px;top:664.0px;" width="16" height="16" viewBox="0 0 16 16"><circle cx="3.5" cy="3.5" r="2.5" fill="#e0e0e0"/><path d="M9 3.5H15M12.5 1L15 3.5L12.5 6" fill="none" stroke="#e0e0e0" stroke-width="1.6"/><path d="M8.5 8V15M5 11.5H12" stroke="#5fff68" stroke-width="2"/></svg><div class="a" style="left:1085px;top:659px;width:1px;height:27px;background:#4a5160;"></div><svg class="a" style="left:1098.0px;top:664.0px;" width="16" height="16" viewBox="0 0 16 16"><path d="M1.5 8H11M6 3L1.5 8L6 13M14 5V11" fill="none" stroke="#e0e0e0" stroke-width="1.8"/></svg><svg class="a" style="left:1130.0px;top:664.0px;" width="16" height="16" viewBox="0 0 16 16"><path d="M4.5 8H14.5M10 3L14.5 8L10 13M2 5V11" fill="none" stroke="#e0e0e0" stroke-width="1.8"/></svg><svg class="a" style="left:1162.0px;top:664.0px;" width="16" height="16" viewBox="0 0 16 16"><path d="M5.5 2.5V1.2H10.5V2.5M1.5 3.5H14.5" stroke="#e0e0e0" stroke-width="2" fill="none"/><path d="M3 5.5H13V14Q13 15 12 15H4Q3 15 3 14Z" fill="#e0e0e0"/><path d="M6 7V13M8 7V13M10 7V13" stroke="#363d4a" stroke-width="1.2"/></svg><div class="a" style="left:1189px;top:659px;width:1px;height:27px;background:#4a5160;"></div><div class="a t" style="top:662.0px;height:20px;line-height:20px;font-size:14.6px;color:#cdcfd2;left:1200px;">Frame Duration:</div><div class="a" style="left:1316px;top:659px;width:63px;height:27px;background:#242932;border-radius:2px;border-bottom:2px solid #1d2128;box-sizing:border-box;"></div><div class="a t" style="top:662.0px;height:20px;line-height:20px;font-size:14.6px;color:#cdcfd2;left:1322px;">× 1</div><svg class="a" style="left:1378.0px;top:664.0px;" width="16" height="16" viewBox="0 0 16 16"><path d="M4.5 6L8 2.5L11.5 6M4.5 10L8 13.5L11.5 10" fill="none" stroke="#a9acb0" stroke-width="1.6"/></svg><svg class="a" style="left:1413.5px;top:664.5px;" width="15" height="15" viewBox="0 0 16 16"><circle cx="8" cy="8" r="7" fill="#e0e0e0"/><path d="M4 8H12" stroke="#363d4a" stroke-width="2.2"/></svg><svg class="a" style="left:1445.5px;top:664.5px;" width="15" height="15" viewBox="0 0 16 16"><circle cx="8" cy="8" r="7" fill="#e0e0e0"/><path d="M6 5.5L8.3 4V12.5" fill="none" stroke="#363d4a" stroke-width="2"/></svg><svg class="a" style="left:1477.5px;top:664.5px;" width="15" height="15" viewBox="0 0 16 16"><circle cx="8" cy="8" r="7" fill="#e0e0e0"/><path d="M4 8H12M8 4V12" stroke="#363d4a" stroke-width="2.2"/></svg><div class="a" style="left:478px;top:690px;width:222px;height:27px;background:#242932;border-radius:2px;border-bottom:2px solid #1d2128;box-sizing:border-box;"></div><div class="a t" style="top:693.0px;height:20px;line-height:20px;font-size:14.6px;color:#8c9096;left:484px;">Filter Animations</div><svg class="a" style="left:677.0px;top:695.0px;" width="16" height="16" viewBox="0 0 16 16"><circle cx="6.5" cy="6.5" r="4.3" fill="none" stroke="#e0e0e0" stroke-width="2"/><path d="M9.6 9.6L14 14" stroke="#e0e0e0" stroke-width="2" stroke-linecap="round"/></svg><div class="a" style="left:478px;top:721px;width:222px;height:205px;background:#21252d;border-radius:2px;"></div><div class="a" style="left:494px;top:725px;width:202px;height:26px;background:#3a506a;border-radius:2px;"></div><div class="a t" style="top:728.0px;height:20px;line-height:20px;font-size:14.6px;color:#e6e8ea;left:494px;">default</div><div class="a" style="left:708px;top:693px;width:791px;height:233px;background:#21252d;border-radius:2px;"></div><div class="a" style="left:709px;top:694px;width:156px;height:136px;background:#3a506a;border-radius:2px;"></div><svg class="a" style="left:745px;top:706px;shape-rendering:crispEdges;" width="83.41" height="87.8" viewBox="0 0 19 20"><rect x="1" y="0" width="2" height="1" fill="#000000"/><rect x="7" y="0" width="5" height="1" fill="#000000"/><rect x="0" y="1" width="1" height="1" fill="#000000"/><rect x="1" y="1" width="2" height="1" fill="#f87858"/><rect x="3" y="1" width="1" height="1" fill="#000000"/><rect x="5" y="1" width="2" height="1" fill="#000000"/><rect x="7" y="1" width="5" height="1" fill="#ffffff"/><rect x="12" y="1" width="2" height="1" fill="#000000"/><rect x="0" y="2" width="1" height="1" fill="#000000"/><rect x="1" y="2" width="2" height="1" fill="#f87858"/><rect x="3" y="2" width="2" height="1" fill="#000000"/><rect x="5" y="2" width="9" height="1" fill="#ffffff"/><rect x="14" y="2" width="1" height="1" fill="#000000"/><rect x="1" y="3" width="3" height="1" fill="#000000"/><rect x="4" y="3" width="4" height="1" fill="#ffffff"/><rect x="8" y="3" width="7" height="1" fill="#f87858"/><rect x="15" y="3" width="1" height="1" fill="#000000"/><rect x="3" y="4" width="1" height="1" fill="#000000"/><rect x="4" y="4" width="3" height="1" fill="#ffffff"/><rect x="7" y="4" width="2" height="1" fill="#f87858"/><rect x="9" y="4" width="1" height="1" fill="#000000"/><rect x="10" y="4" width="3" height="1" fill="#f87858"/><rect x="13" y="4" width="1" height="1" fill="#000000"/><rect x="14" y="4" width="1" height="1" fill="#f87858"/><rect x="15" y="4" width="1" height="1" fill="#000000"/><rect x="3" y="5" width="1" height="1" fill="#000000"/><rect x="4" y="5" width="3" height="1" fill="#ffffff"/><rect x="7" y="5" width="2" height="1" fill="#f87858"/><rect x="9" y="5" width="1" height="1" fill="#000000"/><rect x="10" y="5" width="3" height="1" fill="#f87858"/><rect x="13" y="5" width="1" height="1" fill="#000000"/><rect x="14" y="5" width="1" height="1" fill="#f87858"/><rect x="15" y="5" width="1" height="1" fill="#000000"/><rect x="3" y="6" width="1" height="1" fill="#000000"/><rect x="4" y="6" width="3" height="1" fill="#ffffff"/><rect x="7" y="6" width="2" height="1" fill="#f87858"/><rect x="9" y="6" width="1" height="1" fill="#000000"/><rect x="10" y="6" width="3" height="1" fill="#f87858"/><rect x="13" y="6" width="1" height="1" fill="#000000"/><rect x="14" y="6" width="1" height="1" fill="#f87858"/><rect x="15" y="6" width="1" height="1" fill="#000000"/><rect x="3" y="7" width="1" height="1" fill="#000000"/><rect x="4" y="7" width="4" height="1" fill="#ffffff"/><rect x="8" y="7" width="7" height="1" fill="#f87858"/><rect x="15" y="7" width="1" height="1" fill="#000000"/><rect x="3" y="8" width="2" height="1" fill="#000000"/><rect x="5" y="8" width="9" height="1" fill="#ffffff"/><rect x="14" y="8" width="2" height="1" fill="#000000"/><rect x="2" y="9" width="1" height="1" fill="#000000"/><rect x="3" y="9" width="2" height="1" fill="#ffffff"/><rect x="5" y="9" width="9" height="1" fill="#000000"/><rect x="14" y="9" width="2" height="1" fill="#ffffff"/><rect x="16" y="9" width="1" height="1" fill="#000000"/><rect x="1" y="10" width="1" height="1" fill="#000000"/><rect x="2" y="10" width="4" height="1" fill="#ffffff"/><rect x="6" y="10" width="1" height="1" fill="#000000"/><rect x="7" y="10" width="6" height="1" fill="#3cbcfc"/><rect x="13" y="10" width="1" height="1" fill="#000000"/><rect x="14" y="10" width="3" height="1" fill="#ffffff"/><rect x="17" y="10" width="1" height="1" fill="#000000"/><rect x="0" y="11" width="1" height="1" fill="#000000"/><rect x="1" y="11" width="4" height="1" fill="#ffffff"/><rect x="5" y="11" width="1" height="1" fill="#000000"/><rect x="6" y="11" width="8" height="1" fill="#3cbcfc"/><rect x="14" y="11" width="2" height="1" fill="#000000"/><rect x="16" y="11" width="1" height="1" fill="#3cbcfc"/><rect x="17" y="11" width="2" height="1" fill="#000000"/><rect x="0" y="12" width="1" height="1" fill="#000000"/><rect x="1" y="12" width="1" height="1" fill="#3cbcfc"/><rect x="2" y="12" width="1" height="1" fill="#000000"/><rect x="3" y="12" width="1" height="1" fill="#ffffff"/><rect x="4" y="12" width="5" height="1" fill="#000000"/><rect x="9" y="12" width="3" height="1" fill="#ffffff"/><rect x="12" y="12" width="4" height="1" fill="#000000"/><rect x="16" y="12" width="2" height="1" fill="#3cbcfc"/><rect x="18" y="12" width="1" height="1" fill="#000000"/><rect x="0" y="13" width="1" height="1" fill="#000000"/><rect x="1" y="13" width="2" height="1" fill="#3cbcfc"/><rect x="3" y="13" width="3" height="1" fill="#000000"/><rect x="6" y="13" width="8" height="1" fill="#3cbcfc"/><rect x="14" y="13" width="4" height="1" fill="#000000"/><rect x="1" y="14" width="2" height="1" fill="#000000"/><rect x="5" y="14" width="3" height="1" fill="#000000"/><rect x="8" y="14" width="4" height="1" fill="#3cbcfc"/><rect x="12" y="14" width="3" height="1" fill="#000000"/><rect x="5" y="15" width="1" height="1" fill="#000000"/><rect x="6" y="15" width="3" height="1" fill="#ffffff"/><rect x="9" y="15" width="3" height="1" fill="#000000"/><rect x="12" y="15" width="3" height="1" fill="#ffffff"/><rect x="15" y="15" width="1" height="1" fill="#000000"/><rect x="5" y="16" width="4" height="1" fill="#000000"/><rect x="10" y="16" width="6" height="1" fill="#000000"/><rect x="4" y="17" width="1" height="1" fill="#000000"/><rect x="5" y="17" width="4" height="1" fill="#3cbcfc"/><rect x="9" y="17" width="3" height="1" fill="#000000"/><rect x="12" y="17" width="4" height="1" fill="#3cbcfc"/><rect x="16" y="17" width="1" height="1" fill="#000000"/><rect x="3" y="18" width="15" height="1" fill="#000000"/><rect x="4" y="19" width="13" height="1" fill="#000000"/></svg><svg class="a" style="left:906px;top:706px;shape-rendering:crispEdges;" width="74.63" height="87.8" viewBox="0 0 17 20"><rect x="2" y="0" width="2" height="1" fill="#000000"/><rect x="7" y="0" width="5" height="1" fill="#000000"/><rect x="1" y="1" width="1" height="1" fill="#000000"/><rect x="2" y="1" width="2" height="1" fill="#f87858"/><rect x="4" y="1" width="1" height="1" fill="#000000"/><rect x="6" y="1" width="1" height="1" fill="#000000"/><rect x="7" y="1" width="5" height="1" fill="#ffffff"/><rect x="12" y="1" width="2" height="1" fill="#000000"/><rect x="1" y="2" width="1" height="1" fill="#000000"/><rect x="2" y="2" width="2" height="1" fill="#f87858"/><rect x="4" y="2" width="2" height="1" fill="#000000"/><rect x="6" y="2" width="8" height="1" fill="#ffffff"/><rect x="14" y="2" width="1" height="1" fill="#000000"/><rect x="2" y="3" width="3" height="1" fill="#000000"/><rect x="5" y="3" width="1" height="1" fill="#ffffff"/><rect x="6" y="3" width="7" height="1" fill="#f87858"/><rect x="13" y="3" width="2" height="1" fill="#ffffff"/><rect x="15" y="3" width="1" height="1" fill="#000000"/><rect x="4" y="4" width="1" height="1" fill="#000000"/><rect x="5" y="4" width="1" height="1" fill="#ffffff"/><rect x="6" y="4" width="2" height="1" fill="#f87858"/><rect x="8" y="4" width="1" height="1" fill="#000000"/><rect x="9" y="4" width="3" height="1" fill="#f87858"/><rect x="12" y="4" width="1" height="1" fill="#000000"/><rect x="13" y="4" width="1" height="1" fill="#f87858"/><rect x="14" y="4" width="1" height="1" fill="#ffffff"/><rect x="15" y="4" width="1" height="1" fill="#000000"/><rect x="4" y="5" width="1" height="1" fill="#000000"/><rect x="5" y="5" width="1" height="1" fill="#ffffff"/><rect x="6" y="5" width="2" height="1" fill="#f87858"/><rect x="8" y="5" width="1" height="1" fill="#000000"/><rect x="9" y="5" width="3" height="1" fill="#f87858"/><rect x="12" y="5" width="1" height="1" fill="#000000"/><rect x="13" y="5" width="1" height="1" fill="#f87858"/><rect x="14" y="5" width="1" height="1" fill="#ffffff"/><rect x="15" y="5" width="1" height="1" fill="#000000"/><rect x="4" y="6" width="1" height="1" fill="#000000"/><rect x="5" y="6" width="1" height="1" fill="#ffffff"/><rect x="6" y="6" width="2" height="1" fill="#f87858"/><rect x="8" y="6" width="1" height="1" fill="#000000"/><rect x="9" y="6" width="3" height="1" fill="#f87858"/><rect x="12" y="6" width="1" height="1" fill="#000000"/><rect x="13" y="6" width="1" height="1" fill="#f87858"/><rect x="14" y="6" width="1" height="1" fill="#ffffff"/><rect x="15" y="6" width="1" height="1" fill="#000000"/><rect x="4" y="7" width="1" height="1" fill="#000000"/><rect x="5" y="7" width="2" height="1" fill="#ffffff"/><rect x="7" y="7" width="7" height="1" fill="#f87858"/><rect x="14" y="7" width="1" height="1" fill="#ffffff"/><rect x="15" y="7" width="1" height="1" fill="#000000"/><rect x="4" y="8" width="2" height="1" fill="#000000"/><rect x="6" y="8" width="8" height="1" fill="#ffffff"/><rect x="14" y="8" width="2" height="1" fill="#000000"/><rect x="3" y="9" width="1" height="1" fill="#000000"/><rect x="4" y="9" width="1" height="1" fill="#ffffff"/><rect x="5" y="9" width="9" height="1" fill="#000000"/><rect x="14" y="9" width="1" height="1" fill="#ffffff"/><rect x="15" y="9" width="1" height="1" fill="#000000"/><rect x="2" y="10" width="1" height="1" fill="#000000"/><rect x="3" y="10" width="2" height="1" fill="#ffffff"/><rect x="5" y="10" width="9" height="1" fill="#3cbcfc"/><rect x="14" y="10" width="2" height="1" fill="#ffffff"/><rect x="16" y="10" width="1" height="1" fill="#000000"/><rect x="0" y="11" width="1" height="1" fill="#000000"/><rect x="1" y="11" width="2" height="1" fill="#3cbcfc"/><rect x="3" y="11" width="1" height="1" fill="#ffffff"/><rect x="4" y="11" width="9" height="1" fill="#3cbcfc"/><rect x="13" y="11" width="1" height="1" fill="#000000"/><rect x="14" y="11" width="2" height="1" fill="#ffffff"/><rect x="16" y="11" width="1" height="1" fill="#000000"/><rect x="0" y="12" width="1" height="1" fill="#000000"/><rect x="1" y="12" width="1" height="1" fill="#3cbcfc"/><rect x="2" y="12" width="6" height="1" fill="#000000"/><rect x="8" y="12" width="3" height="1" fill="#ffffff"/><rect x="11" y="12" width="5" height="1" fill="#000000"/><rect x="1" y="13" width="2" height="1" fill="#000000"/><rect x="4" y="13" width="1" height="1" fill="#000000"/><rect x="5" y="13" width="8" height="1" fill="#3cbcfc"/><rect x="13" y="13" width="1" height="1" fill="#000000"/><rect x="4" y="14" width="1" height="1" fill="#000000"/><rect x="5" y="14" width="1" height="1" fill="#ffffff"/><rect x="6" y="14" width="6" height="1" fill="#3cbcfc"/><rect x="12" y="14" width="1" height="1" fill="#ffffff"/><rect x="13" y="14" width="1" height="1" fill="#000000"/><rect x="4" y="15" width="1" height="1" fill="#000000"/><rect x="5" y="15" width="3" height="1" fill="#ffffff"/><rect x="8" y="15" width="1" height="1" fill="#000000"/><rect x="9" y="15" width="2" height="1" fill="#3cbcfc"/><rect x="11" y="15" width="2" height="1" fill="#ffffff"/><rect x="13" y="15" width="1" height="1" fill="#000000"/><rect x="4" y="16" width="1" height="1" fill="#000000"/><rect x="5" y="16" width="2" height="1" fill="#ffffff"/><rect x="7" y="16" width="3" height="1" fill="#000000"/><rect x="10" y="16" width="2" height="1" fill="#ffffff"/><rect x="12" y="16" width="1" height="1" fill="#000000"/><rect x="3" y="17" width="11" height="1" fill="#000000"/><rect x="2" y="18" width="2" height="1" fill="#000000"/><rect x="4" y="18" width="2" height="1" fill="#3cbcfc"/><rect x="6" y="18" width="9" height="1" fill="#000000"/><rect x="3" y="19" width="11" height="1" fill="#000000"/></svg><svg class="a" style="left:1062px;top:706px;shape-rendering:crispEdges;" width="74.63" height="87.8" viewBox="0 0 17 20"><rect x="6" y="0" width="5" height="1" fill="#000000"/><rect x="4" y="1" width="2" height="1" fill="#000000"/><rect x="6" y="1" width="5" height="1" fill="#ffffff"/><rect x="11" y="1" width="2" height="1" fill="#000000"/><rect x="3" y="2" width="1" height="1" fill="#000000"/><rect x="4" y="2" width="9" height="1" fill="#ffffff"/><rect x="13" y="2" width="1" height="1" fill="#000000"/><rect x="2" y="3" width="1" height="1" fill="#000000"/><rect x="3" y="3" width="2" height="1" fill="#ffffff"/><rect x="5" y="3" width="7" height="1" fill="#f87858"/><rect x="12" y="3" width="2" height="1" fill="#ffffff"/><rect x="14" y="3" width="1" height="1" fill="#000000"/><rect x="2" y="4" width="1" height="1" fill="#000000"/><rect x="3" y="4" width="1" height="1" fill="#ffffff"/><rect x="4" y="4" width="2" height="1" fill="#f87858"/><rect x="6" y="4" width="1" height="1" fill="#000000"/><rect x="7" y="4" width="3" height="1" fill="#f87858"/><rect x="10" y="4" width="1" height="1" fill="#000000"/><rect x="11" y="4" width="2" height="1" fill="#f87858"/><rect x="13" y="4" width="1" height="1" fill="#ffffff"/><rect x="14" y="4" width="1" height="1" fill="#000000"/><rect x="2" y="5" width="1" height="1" fill="#000000"/><rect x="3" y="5" width="1" height="1" fill="#ffffff"/><rect x="4" y="5" width="2" height="1" fill="#f87858"/><rect x="6" y="5" width="1" height="1" fill="#000000"/><rect x="7" y="5" width="3" height="1" fill="#f87858"/><rect x="10" y="5" width="1" height="1" fill="#000000"/><rect x="11" y="5" width="2" height="1" fill="#f87858"/><rect x="13" y="5" width="1" height="1" fill="#ffffff"/><rect x="14" y="5" width="1" height="1" fill="#000000"/><rect x="2" y="6" width="1" height="1" fill="#000000"/><rect x="3" y="6" width="1" height="1" fill="#ffffff"/><rect x="4" y="6" width="2" height="1" fill="#f87858"/><rect x="6" y="6" width="1" height="1" fill="#000000"/><rect x="7" y="6" width="3" height="1" fill="#f87858"/><rect x="10" y="6" width="1" height="1" fill="#000000"/><rect x="11" y="6" width="2" height="1" fill="#f87858"/><rect x="13" y="6" width="1" height="1" fill="#ffffff"/><rect x="14" y="6" width="1" height="1" fill="#000000"/><rect x="2" y="7" width="1" height="1" fill="#000000"/><rect x="3" y="7" width="2" height="1" fill="#ffffff"/><rect x="5" y="7" width="7" height="1" fill="#f87858"/><rect x="12" y="7" width="2" height="1" fill="#ffffff"/><rect x="14" y="7" width="1" height="1" fill="#000000"/><rect x="3" y="8" width="1" height="1" fill="#000000"/><rect x="4" y="8" width="9" height="1" fill="#f8f8f8"/><rect x="13" y="8" width="1" height="1" fill="#000000"/><rect x="2" y="9" width="1" height="1" fill="#000000"/><rect x="3" y="9" width="1" height="1" fill="#f8f8f8"/><rect x="4" y="9" width="9" height="1" fill="#000000"/><rect x="13" y="9" width="1" height="1" fill="#f8f8f8"/><rect x="14" y="9" width="1" height="1" fill="#000000"/><rect x="1" y="10" width="1" height="1" fill="#000000"/><rect x="2" y="10" width="2" height="1" fill="#f8f8f8"/><rect x="4" y="10" width="1" height="1" fill="#000000"/><rect x="5" y="10" width="7" height="1" fill="#3cbcfc"/><rect x="12" y="10" width="1" height="1" fill="#000000"/><rect x="13" y="10" width="2" height="1" fill="#f8f8f8"/><rect x="15" y="10" width="1" height="1" fill="#000000"/><rect x="0" y="11" width="1" height="1" fill="#000000"/><rect x="1" y="11" width="1" height="1" fill="#3cbcfc"/><rect x="2" y="11" width="2" height="1" fill="#000000"/><rect x="4" y="11" width="9" height="1" fill="#3cbcfc"/><rect x="13" y="11" width="2" height="1" fill="#000000"/><rect x="15" y="11" width="1" height="1" fill="#3cbcfc"/><rect x="16" y="11" width="1" height="1" fill="#000000"/><rect x="0" y="12" width="1" height="1" fill="#000000"/><rect x="1" y="12" width="2" height="1" fill="#3cbcfc"/><rect x="3" y="12" width="4" height="1" fill="#000000"/><rect x="7" y="12" width="3" height="1" fill="#f8f8f8"/><rect x="10" y="12" width="4" height="1" fill="#000000"/><rect x="14" y="12" width="2" height="1" fill="#3cbcfc"/><rect x="16" y="12" width="1" height="1" fill="#000000"/><rect x="1" y="13" width="3" height="1" fill="#000000"/><rect x="4" y="13" width="9" height="1" fill="#3cbcfc"/><rect x="13" y="13" width="3" height="1" fill="#000000"/><rect x="3" y="14" width="1" height="1" fill="#000000"/><rect x="4" y="14" width="1" height="1" fill="#f8f8f8"/><rect x="5" y="14" width="7" height="1" fill="#3cbcfc"/><rect x="12" y="14" width="1" height="1" fill="#f8f8f8"/><rect x="13" y="14" width="1" height="1" fill="#000000"/><rect x="3" y="15" width="1" height="1" fill="#000000"/><rect x="4" y="15" width="3" height="1" fill="#f8f8f8"/><rect x="7" y="15" width="3" height="1" fill="#000000"/><rect x="10" y="15" width="3" height="1" fill="#f8f8f8"/><rect x="13" y="15" width="1" height="1" fill="#000000"/><rect x="3" y="16" width="11" height="1" fill="#000000"/><rect x="2" y="17" width="2" height="1" fill="#000000"/><rect x="4" y="17" width="3" height="1" fill="#3cbcfc"/><rect x="7" y="17" width="3" height="1" fill="#000000"/><rect x="10" y="17" width="3" height="1" fill="#3cbcfc"/><rect x="13" y="17" width="2" height="1" fill="#000000"/><rect x="1" y="18" width="15" height="1" fill="#000000"/><rect x="2" y="19" width="13" height="1" fill="#000000"/></svg><svg class="a" style="left:1218px;top:706px;shape-rendering:crispEdges;" width="74.63" height="87.8" viewBox="0 0 17 20"><rect x="5" y="0" width="5" height="1" fill="#000000"/><rect x="12" y="0" width="2" height="1" fill="#000000"/><rect x="3" y="1" width="2" height="1" fill="#000000"/><rect x="5" y="1" width="5" height="1" fill="#ffffff"/><rect x="10" y="1" width="2" height="1" fill="#000000"/><rect x="12" y="1" width="2" height="1" fill="#f87858"/><rect x="14" y="1" width="1" height="1" fill="#000000"/><rect x="2" y="2" width="1" height="1" fill="#000000"/><rect x="3" y="2" width="8" height="1" fill="#ffffff"/><rect x="11" y="2" width="1" height="1" fill="#000000"/><rect x="12" y="2" width="2" height="1" fill="#f87858"/><rect x="14" y="2" width="1" height="1" fill="#000000"/><rect x="2" y="3" width="1" height="1" fill="#000000"/><rect x="3" y="3" width="1" height="1" fill="#ffffff"/><rect x="4" y="3" width="7" height="1" fill="#f87858"/><rect x="11" y="3" width="1" height="1" fill="#ffffff"/><rect x="12" y="3" width="3" height="1" fill="#000000"/><rect x="2" y="4" width="1" height="1" fill="#000000"/><rect x="3" y="4" width="2" height="1" fill="#f87858"/><rect x="5" y="4" width="1" height="1" fill="#000000"/><rect x="6" y="4" width="3" height="1" fill="#f87858"/><rect x="9" y="4" width="1" height="1" fill="#000000"/><rect x="10" y="4" width="2" height="1" fill="#f87858"/><rect x="12" y="4" width="1" height="1" fill="#ffffff"/><rect x="13" y="4" width="1" height="1" fill="#000000"/><rect x="2" y="5" width="1" height="1" fill="#000000"/><rect x="3" y="5" width="2" height="1" fill="#f87858"/><rect x="5" y="5" width="1" height="1" fill="#000000"/><rect x="6" y="5" width="3" height="1" fill="#f87858"/><rect x="9" y="5" width="1" height="1" fill="#000000"/><rect x="10" y="5" width="2" height="1" fill="#f87858"/><rect x="12" y="5" width="1" height="1" fill="#ffffff"/><rect x="13" y="5" width="1" height="1" fill="#000000"/><rect x="2" y="6" width="1" height="1" fill="#000000"/><rect x="3" y="6" width="2" height="1" fill="#f87858"/><rect x="5" y="6" width="1" height="1" fill="#000000"/><rect x="6" y="6" width="3" height="1" fill="#f87858"/><rect x="9" y="6" width="1" height="1" fill="#000000"/><rect x="10" y="6" width="2" height="1" fill="#f87858"/><rect x="12" y="6" width="1" height="1" fill="#ffffff"/><rect x="13" y="6" width="1" height="1" fill="#000000"/><rect x="2" y="7" width="1" height="1" fill="#000000"/><rect x="3" y="7" width="1" height="1" fill="#ffffff"/><rect x="4" y="7" width="7" height="1" fill="#f87858"/><rect x="11" y="7" width="2" height="1" fill="#ffffff"/><rect x="13" y="7" width="1" height="1" fill="#000000"/><rect x="2" y="8" width="2" height="1" fill="#000000"/><rect x="4" y="8" width="8" height="1" fill="#ffffff"/><rect x="12" y="8" width="2" height="1" fill="#000000"/><rect x="2" y="9" width="1" height="1" fill="#000000"/><rect x="3" y="9" width="1" height="1" fill="#ffffff"/><rect x="4" y="9" width="9" height="1" fill="#000000"/><rect x="13" y="9" width="1" height="1" fill="#ffffff"/><rect x="14" y="9" width="1" height="1" fill="#000000"/><rect x="1" y="10" width="1" height="1" fill="#000000"/><rect x="2" y="10" width="2" height="1" fill="#ffffff"/><rect x="4" y="10" width="9" height="1" fill="#3cbcfc"/><rect x="13" y="10" width="2" height="1" fill="#ffffff"/><rect x="15" y="10" width="1" height="1" fill="#000000"/><rect x="0" y="11" width="1" height="1" fill="#000000"/><rect x="1" y="11" width="2" height="1" fill="#ffffff"/><rect x="3" y="11" width="1" height="1" fill="#000000"/><rect x="4" y="11" width="10" height="1" fill="#3cbcfc"/><rect x="14" y="11" width="1" height="1" fill="#ffffff"/><rect x="15" y="11" width="1" height="1" fill="#3cbcfc"/><rect x="16" y="11" width="1" height="1" fill="#000000"/><rect x="1" y="12" width="6" height="1" fill="#000000"/><rect x="7" y="12" width="3" height="1" fill="#ffffff"/><rect x="10" y="12" width="5" height="1" fill="#000000"/><rect x="15" y="12" width="1" height="1" fill="#3cbcfc"/><rect x="16" y="12" width="1" height="1" fill="#000000"/><rect x="3" y="13" width="1" height="1" fill="#000000"/><rect x="4" y="13" width="8" height="1" fill="#3cbcfc"/><rect x="12" y="13" width="4" height="1" fill="#000000"/><rect x="3" y="14" width="1" height="1" fill="#000000"/><rect x="4" y="14" width="1" height="1" fill="#ffffff"/><rect x="5" y="14" width="6" height="1" fill="#3cbcfc"/><rect x="11" y="14" width="1" height="1" fill="#ffffff"/><rect x="12" y="14" width="1" height="1" fill="#000000"/><rect x="3" y="15" width="1" height="1" fill="#000000"/><rect x="4" y="15" width="2" height="1" fill="#ffffff"/><rect x="6" y="15" width="2" height="1" fill="#000000"/><rect x="8" y="15" width="2" height="1" fill="#3cbcfc"/><rect x="10" y="15" width="3" height="1" fill="#ffffff"/><rect x="13" y="15" width="1" height="1" fill="#000000"/><rect x="4" y="16" width="6" height="1" fill="#000000"/><rect x="10" y="16" width="2" height="1" fill="#ffffff"/><rect x="12" y="16" width="1" height="1" fill="#000000"/><rect x="2" y="17" width="13" height="1" fill="#000000"/><rect x="1" y="18" width="9" height="1" fill="#000000"/><rect x="10" y="18" width="2" height="1" fill="#3cbcfc"/><rect x="12" y="18" width="4" height="1" fill="#000000"/><rect x="2" y="19" width="13" height="1" fill="#000000"/></svg><div class="a t" style="top:803.0px;height:20px;line-height:20px;font-size:14.6px;color:#cdcfd2;left:583px;width:400px;text-align:center;">0</div><div class="a t" style="top:803.0px;height:20px;line-height:20px;font-size:14.6px;color:#cdcfd2;left:739px;width:400px;text-align:center;">1</div><div class="a t" style="top:803.0px;height:20px;line-height:20px;font-size:14.6px;color:#cdcfd2;left:895px;width:400px;text-align:center;">2</div><div class="a t" style="top:803.0px;height:20px;line-height:20px;font-size:14.6px;color:#cdcfd2;left:1051px;width:400px;text-align:center;">3</div><div class="a" style="left:484px;top:940px;width:8px;height:8px;border-radius:50%;background:#f7665c;"></div><div class="a t" style="top:934.0px;height:20px;line-height:20px;font-size:14.6px;color:#cdcfd2;left:494px;">Output</div><div class="a" style="left:557px;top:940px;width:8px;height:8px;border-radius:50%;background:#f5da66;"></div><div class="a t" style="top:934.0px;height:20px;line-height:20px;font-size:14.6px;color:#ffde66;left:571px;">Debugger (14)</div><div class="a t" style="top:934.0px;height:20px;line-height:20px;font-size:14.6px;color:#cdcfd2;left:682px;">Search Results</div><div class="a t" style="top:934.0px;height:20px;line-height:20px;font-size:14.6px;color:#cdcfd2;left:794px;">Audio</div><div class="a t" style="top:934.0px;height:20px;line-height:20px;font-size:14.6px;color:#cdcfd2;left:849px;">Animation</div><div class="a t" style="top:934.0px;height:20px;line-height:20px;font-size:14.6px;color:#cdcfd2;left:933px;">Shader Editor</div><div class="a t" style="top:934.0px;height:20px;line-height:20px;font-size:14.6px;color:#6db5f5;left:1039px;">SpriteFrames</div><svg class="a" style="left:1362.0px;top:936.0px;" width="14" height="14" viewBox="0 0 16 16"><path d="M3 13Q1 9 3 5L5 3H11L13 5Q15 9 13 13Z" fill="#4a505a"/><circle cx="6" cy="8" r="1.3" fill="#2c313a"/><circle cx="10" cy="8" r="1.3" fill="#2c313a"/></svg><div class="a t" style="top:933.0px;height:20px;line-height:20px;font-size:14.6px;color:#8e9297;left:1387px;">4.1.2.stable</div><svg class="a" style="left:1478.0px;top:936.0px;" width="14" height="14" viewBox="0 0 16 16"><path d="M1 1.5H15" stroke="#e0e0e0" stroke-width="2"/><path d="M4.5 14.5V6M2 8.5L4.5 5.5L7 8.5M11.5 14.5V6M9 8.5L11.5 5.5L14 8.5" fill="none" stroke="#e0e0e0" stroke-width="1.8"/></svg><svg class="a" style="left:1893.0px;top:9.0px;" width="16" height="16" viewBox="0 0 16 16"><circle cx="8" cy="2.2" r="1.8" fill="#808488"/><circle cx="8" cy="8" r="1.8" fill="#808488"/><circle cx="8" cy="13.8" r="1.8" fill="#808488"/></svg><svg class="a" style="left:1521.0px;top:42.0px;" width="16" height="16" viewBox="0 0 16 16"><path d="M2 1H9L13 5V9H9V15H2Z" fill="#e0e0e0"/><path d="M9 1V5H13" fill="#c8c8c8"/><path d="M12 9.5V15.5M9 12.5H15" stroke="#5fff68" stroke-width="2"/></svg><svg class="a" style="left:1553.0px;top:42.0px;" width="16" height="16" viewBox="0 0 16 16"><path d="M1.5 13.5V3.5Q1.5 2.5 2.5 2.5H6L7.5 4H12.5Q13.5 4 13.5 5V6.5" fill="none" stroke="#e0e0e0" stroke-width="1.3"/><path d="M3.5 7H15.5L13.5 14H1.5Z" fill="#e0e0e0"/></svg><svg class="a" style="left:1584.0px;top:42.0px;" width="16" height="16" viewBox="0 0 16 16"><path d="M1 2Q1 1 2 1H12L15 4V14Q15 15 14 15H2Q1 15 1 14Z" fill="#7d828a"/><rect x="4" y="1" width="6" height="4.5" fill="#363d4a"/><rect x="7" y="2" width="2" height="3" fill="#7d828a"/><circle cx="8" cy="10.5" r="2" fill="#363d4a"/></svg><svg class="a" style="left:1616.0px;top:42.0px;" width="16" height="16" viewBox="0 0 16 16"><circle cx="8" cy="2.2" r="1.9" fill="#e0e0e0"/><circle cx="8" cy="8" r="1.9" fill="#e0e0e0"/><circle cx="8" cy="13.8" r="1.9" fill="#e0e0e0"/></svg><svg class="a" style="left:1832.0px;top:42.0px;" width="16" height="16" viewBox="0 0 16 16"><path d="M10 2L5 8L10 14" fill="none" stroke="#e0e0e0" stroke-width="1.8"/></svg><svg class="a" style="left:1855.0px;top:42.0px;" width="16" height="16" viewBox="0 0 16 16"><path d="M6 2L11 8L6 14" fill="none" stroke="#7d8188" stroke-width="1.8"/></svg><svg class="a" style="left:1883.0px;top:42.0px;" width="16" height="16" viewBox="0 0 16 16"><path d="M3.7 8A5.8 5.8 0 1 1 9.5 13.8" fill="none" stroke="#e0e0e0" stroke-width="1.8" stroke-linecap="round"/><path d="M0.6 7L6.8 7L3.7 11.6Z" fill="#e0e0e0"/><path d="M9.3 4.6V8.8H12.6" fill="none" stroke="#e0e0e0" stroke-width="1.7"/></svg><div class="a" style="left:1515px;top:67px;width:359px;height:26px;background:#242932;border-radius:3px;"></div><svg class="a" style="left:1521.0px;top:72.0px;" width="16" height="16" viewBox="0 0 16 16"><rect x="5.5" y="1.5" width="10" height="10" rx="2.3" fill="#6a80c6"/><rect x="3.5" y="3" width="10" height="10.5" rx="2.3" fill="#7a91dc"/><rect x="1" y="4.5" width="10.5" height="10.5" rx="2.3" fill="#8da5f3"/><rect x="2.6" y="8.3" width="1.6" height="2.2" fill="#3d4f6e"/><rect x="8" y="8.3" width="1.6" height="2.2" fill="#3d4f6e"/><path d="M4.3 12Q6.2 13.6 8 12Z" fill="#3d4f6e"/></svg><div class="a t" style="top:70.0px;height:20px;line-height:20px;font-size:14.6px;color:#cdcfd2;left:1543px;">Character1</div><svg class="a" style="left:1853.0px;top:72.0px;" width="16" height="16" viewBox="0 0 16 16"><path d="M3.5 6L8 10.5L12.5 6" fill="none" stroke="#e0e0e0" stroke-width="1.8"/></svg><svg class="a" style="left:1883.0px;top:72.0px;" width="16" height="16" viewBox="0 0 16 16"><circle cx="10" cy="4.3" r="2.7" fill="none" stroke="#e0e0e0" stroke-width="1.7"/><path d="M8 6.3L5.3 9" stroke="#e0e0e0" stroke-width="1.7"/><text x="8" y="15.6" font-family="Liberation Sans" font-weight="bold" font-size="7.6" fill="#e0e0e0" stroke="#e0e0e0" stroke-width="0.45" text-anchor="middle" letter-spacing="0.3">DOC</text></svg><div class="a" style="left:1515px;top:97px;width:359px;height:27px;background:#242932;border-radius:2px;border-bottom:2px solid #1d2128;box-sizing:border-box;"></div><div class="a t" style="top:100.0px;height:20px;line-height:20px;font-size:14.6px;color:#8c9096;left:1521px;">Filter Properties</div><svg class="a" style="left:1851.0px;top:102.0px;" width="16" height="16" viewBox="0 0 16 16"><circle cx="6.5" cy="6.5" r="4.3" fill="none" stroke="#e0e0e0" stroke-width="2"/><path d="M9.6 9.6L14 14" stroke="#e0e0e0" stroke-width="2" stroke-linecap="round"/></svg><svg class="a" style="left:1883.0px;top:102.0px;" width="16" height="16" viewBox="0 0 16 16"><circle cx="3.6" cy="2.2" r="1.2" fill="#e0e0e0"/><path d="M3.6 2.5V8.5" stroke="#e0e0e0" stroke-width="1.3"/><path d="M1.2 8.3H6V13Q6 15 3.6 15Q1.2 15 1.2 13Z" fill="#e0e0e0"/><path d="M8.9 1.3V3.8Q8.9 6.3 11.5 6.3Q14.1 6.3 14.1 3.8V1.3M11.5 6.3V15" fill="none" stroke="#e0e0e0" stroke-width="1.9"/></svg><div class="a" style="left:1515px;top:128px;width:391px;height:830px;background:#21252d;border-radius:2px;"></div><div class="a" style="left:1519px;top:128px;width:371px;height:10px;background:#3d424b;"></div><div class="a" style="left:1519px;top:128px;width:371px;height:10px;overflow:hidden;"><svg class="a" style="left:132px;top:-5px" width="12" height="12" viewBox="0 0 16 16"><circle cx="5" cy="11" r="3" fill="#e0e0e0"/><path d="M7 9L13 3" stroke="#e0e0e0" stroke-width="2.6"/></svg><div class="a t" style="left:155px;top:-11px;height:20px;line-height:20px;font-size:14.6px;font-weight:bold;color:#cdcfd2;">CanvasItem</div></div><div class="a" style="left:1519px;top:138px;width:371px;height:88px;background:#262b33;"></div><svg class="a" style="left:1520.5px;top:142.5px;" width="13" height="13" viewBox="0 0 16 16"><path d="M6.2 4.3L9.9 8L6.2 11.7" fill="none" stroke="#8a8d93" stroke-width="2"/></svg><div class="a t" style="top:139.0px;height:20px;line-height:20px;font-size:14.6px;color:#cdcfd2;font-weight:bold;left:1533px;">Visibility</div><svg class="a" style="left:1520.5px;top:164.5px;" width="13" height="13" viewBox="0 0 16 16"><path d="M6.2 4.3L9.9 8L6.2 11.7" fill="none" stroke="#8a8d93" stroke-width="2"/></svg><div class="a t" style="top:161.0px;height:20px;line-height:20px;font-size:14.6px;color:#cdcfd2;font-weight:bold;left:1533px;">Ordering</div><svg class="a" style="left:1520.5px;top:186.5px;" width="13" height="13" viewBox="0 0 16 16"><path d="M6.2 4.3L9.9 8L6.2 11.7" fill="none" stroke="#8a8d93" stroke-width="2"/></svg><div class="a t" style="top:183.0px;height:20px;line-height:20px;font-size:14.6px;color:#cdcfd2;font-weight:bold;left:1533px;">Texture</div><svg class="a" style="left:1520.5px;top:208.5px;" width="13" height="13" viewBox="0 0 16 16"><path d="M4.3 6.3L8 10L11.7 6.3" fill="none" stroke="#8a8d93" stroke-width="2"/></svg><div class="a t" style="top:204.0px;height:20px;line-height:20px;font-size:14.6px;color:#cdcfd2;font-weight:bold;left:1533px;">Material</div><div class="a" style="left:1531px;top:226px;width:359px;height:571px;background:#2b3340;"></div><div class="a" style="left:1531px;top:226px;width:181px;height:28px;background:#476c95;"></div><div class="a t" style="top:230.0px;height:20px;line-height:20px;font-size:14.6px;color:#e8eaec;left:1539px;">Material</div><svg class="a" style="left:1693.0px;top:233.0px;" width="14" height="14" viewBox="0 0 16 16"><path d="M2.6 8A6 6 0 1 1 7.8 13.9" fill="none" stroke="#e0e0e0" stroke-width="1.9" stroke-linecap="round"/><path d="M-0.2 7.2L6.4 7.2L3.1 11.8Z" fill="#e0e0e0"/></svg><div class="a" style="left:1712px;top:226px;width:178px;height:28px;background:#1f232a;border-radius:3px 0 0 3px;"></div><svg class="a" style="left:1717.5px;top:232.5px;" width="15" height="15" viewBox="0 0 16 16"><defs><linearGradient id="rg" x1="0" y1="0" x2="0" y2="1"><stop offset="0" stop-color="#e0435f"/><stop offset="0.3" stop-color="#6cf05a"/><stop offset="0.55" stop-color="#3ddcf0"/><stop offset="0.75" stop-color="#4a5cf5"/><stop offset="1" stop-color="#a040d0"/></linearGradient></defs><path d="M2 2H10L14 6V14H2Z" fill="none" stroke="url(#rg)" stroke-width="2.2"/><path d="M9.5 3V6.5H13" fill="#6cf05a" stroke="#6cf05a" stroke-width="1.5"/></svg><div class="a" style="left:1531px;top:253px;width:359px;height:3px;background:#44678d;"></div><div class="a t" style="top:230.0px;height:20px;line-height:20px;font-size:14.6px;color:#6db5f5;left:1745px;">ShaderMaterial</div><svg class="a" style="left:1870.0px;top:233.0px;" width="14" height="14" viewBox="0 0 16 16"><path d="M4.5 6.5L8 10L11.5 6.5" fill="none" stroke="#c8cacc" stroke-width="1.6"/></svg><div class="a" style="left:1531px;top:254px;width:2px;height:543px;background:#44678d;"></div><div class="a" style="left:1888px;top:254px;width:2px;height:543px;background:#44678d;"></div><div class="a" style="left:1531px;top:795px;width:359px;height:2px;background:#44678d;"></div><div class="a" style="left:1535px;top:258px;width:352px;height:150px;overflow:hidden;"><svg width="352" height="160" style="shape-rendering:crispEdges;display:block"><rect x="0" y="0" width="16" height="16" fill="#9a9ea4"/><rect x="16" y="0" width="16" height="16" fill="#565c65"/><rect x="32" y="0" width="16" height="16" fill="#9a9ea4"/><rect x="48" y="0" width="16" height="16" fill="#565c65"/><rect x="64" y="0" width="16" height="16" fill="#9a9ea4"/><rect x="80" y="0" width="16" height="16" fill="#565c65"/><rect x="96" y="0" width="16" height="16" fill="#9a9ea4"/><rect x="112" y="0" width="16" height="16" fill="#565c65"/><rect x="128" y="0" width="16" height="16" fill="#9a9ea4"/><rect x="144" y="0" width="16" height="16" fill="#565c65"/><rect x="160" y="0" width="16" height="16" fill="#9a9ea4"/><rect x="176" y="0" width="16" height="16" fill="#565c65"/><rect x="192" y="0" width="16" height="16" fill="#9a9ea4"/><rect x="208" y="0" width="16" height="16" fill="#565c65"/><rect x="224" y="0" width="16" height="16" fill="#9a9ea4"/><rect x="240" y="0" width="16" height="16" fill="#565c65"/><rect x="256" y="0" width="16" height="16" fill="#9a9ea4"/><rect x="272" y="0" width="16" height="16" fill="#565c65"/><rect x="288" y="0" width="16" height="16" fill="#9a9ea4"/><rect x="304" y="0" width="16" height="16" fill="#565c65"/><rect x="320" y="0" width="16" height="16" fill="#9a9ea4"/><rect x="336" y="0" width="16" height="16" fill="#565c65"/><rect x="0" y="16" width="16" height="16" fill="#565c65"/><rect x="16" y="16" width="16" height="16" fill="#9a9ea4"/><rect x="32" y="16" width="16" height="16" fill="#565c65"/><rect x="48" y="16" width="16" height="16" fill="#9a9ea4"/><rect x="64" y="16" width="16" height="16" fill="#565c65"/><rect x="80" y="16" width="16" height="16" fill="#9a9ea4"/><rect x="96" y="16" width="16" height="16" fill="#565c65"/><rect x="112" y="16" width="16" height="16" fill="#9a9ea4"/><rect x="128" y="16" width="16" height="16" fill="#565c65"/><rect x="144" y="16" width="16" height="16" fill="#9a9ea4"/><rect x="160" y="16" width="16" height="16" fill="#565c65"/><rect x="176" y="16" width="16" height="16" fill="#9a9ea4"/><rect x="192" y="16" width="16" height="16" fill="#565c65"/><rect x="208" y="16" width="16" height="16" fill="#9a9ea4"/><rect x="224" y="16" width="16" height="16" fill="#565c65"/><rect x="240" y="16" width="16" height="16" fill="#9a9ea4"/><rect x="256" y="16" width="16" height="16" fill="#565c65"/><rect x="272" y="16" width="16" height="16" fill="#9a9ea4"/><rect x="288" y="16" width="16" height="16" fill="#565c65"/><rect x="304" y="16" width="16" height="16" fill="#9a9ea4"/><rect x="320" y="16" width="16" height="16" fill="#565c65"/><rect x="336" y="16" width="16" height="16" fill="#9a9ea4"/><rect x="0" y="32" width="16" height="16" fill="#9a9ea4"/><rect x="16" y="32" width="16" height="16" fill="#565c65"/><rect x="32" y="32" width="16" height="16" fill="#9a9ea4"/><rect x="48" y="32" width="16" height="16" fill="#565c65"/><rect x="64" y="32" width="16" height="16" fill="#9a9ea4"/><rect x="80" y="32" width="16" height="16" fill="#565c65"/><rect x="96" y="32" width="16" height="16" fill="#9a9ea4"/><rect x="112" y="32" width="16" height="16" fill="#565c65"/><rect x="128" y="32" width="16" height="16" fill="#9a9ea4"/><rect x="144" y="32" width="16" height="16" fill="#565c65"/><rect x="160" y="32" width="16" height="16" fill="#9a9ea4"/><rect x="176" y="32" width="16" height="16" fill="#565c65"/><rect x="192" y="32" width="16" height="16" fill="#9a9ea4"/><rect x="208" y="32" width="16" height="16" fill="#565c65"/><rect x="224" y="32" width="16" height="16" fill="#9a9ea4"/><rect x="240" y="32" width="16" height="16" fill="#565c65"/><rect x="256" y="32" width="16" height="16" fill="#9a9ea4"/><rect x="272" y="32" width="16" height="16" fill="#565c65"/><rect x="288" y="32" width="16" height="16" fill="#9a9ea4"/><rect x="304" y="32" width="16" height="16" fill="#565c65"/><rect x="320" y="32" width="16" height="16" fill="#9a9ea4"/><rect x="336" y="32" width="16" height="16" fill="#565c65"/><rect x="0" y="48" width="16" height="16" fill="#565c65"/><rect x="16" y="48" width="16" height="16" fill="#9a9ea4"/><rect x="32" y="48" width="16" height="16" fill="#565c65"/><rect x="48" y="48" width="16" height="16" fill="#9a9ea4"/><rect x="64" y="48" width="16" height="16" fill="#565c65"/><rect x="80" y="48" width="16" height="16" fill="#9a9ea4"/><rect x="96" y="48" width="16" height="16" fill="#565c65"/><rect x="112" y="48" width="16" height="16" fill="#9a9ea4"/><rect x="128" y="48" width="16" height="16" fill="#565c65"/><rect x="144" y="48" width="16" height="16" fill="#9a9ea4"/><rect x="160" y="48" width="16" height="16" fill="#565c65"/><rect x="176" y="48" width="16" height="16" fill="#9a9ea4"/><rect x="192" y="48" width="16" height="16" fill="#565c65"/><rect x="208" y="48" width="16" height="16" fill="#9a9ea4"/><rect x="224" y="48" width="16" height="16" fill="#565c65"/><rect x="240" y="48" width="16" height="16" fill="#9a9ea4"/><rect x="256" y="48" width="16" height="16" fill="#565c65"/><rect x="272" y="48" width="16" height="16" fill="#9a9ea4"/><rect x="288" y="48" width="16" height="16" fill="#565c65"/><rect x="304" y="48" width="16" height="16" fill="#9a9ea4"/><rect x="320" y="48" width="16" height="16" fill="#565c65"/><rect x="336" y="48" width="16" height="16" fill="#9a9ea4"/><rect x="0" y="64" width="16" height="16" fill="#9a9ea4"/><rect x="16" y="64" width="16" height="16" fill="#565c65"/><rect x="32" y="64" width="16" height="16" fill="#9a9ea4"/><rect x="48" y="64" width="16" height="16" fill="#565c65"/><rect x="64" y="64" width="16" height="16" fill="#9a9ea4"/><rect x="80" y="64" width="16" height="16" fill="#565c65"/><rect x="96" y="64" width="16" height="16" fill="#9a9ea4"/><rect x="112" y="64" width="16" height="16" fill="#565c65"/><rect x="128" y="64" width="16" height="16" fill="#9a9ea4"/><rect x="144" y="64" width="16" height="16" fill="#565c65"/><rect x="160" y="64" width="16" height="16" fill="#9a9ea4"/><rect x="176" y="64" width="16" height="16" fill="#565c65"/><rect x="192" y="64" width="16" height="16" fill="#9a9ea4"/><rect x="208" y="64" width="16" height="16" fill="#565c65"/><rect x="224" y="64" width="16" height="16" fill="#9a9ea4"/><rect x="240" y="64" width="16" height="16" fill="#565c65"/><rect x="256" y="64" width="16" height="16" fill="#9a9ea4"/><rect x="272" y="64" width="16" height="16" fill="#565c65"/><rect x="288" y="64" width="16" height="16" fill="#9a9ea4"/><rect x="304" y="64" width="16" height="16" fill="#565c65"/><rect x="320" y="64" width="16" height="16" fill="#9a9ea4"/><rect x="336" y="64" width="16" height="16" fill="#565c65"/><rect x="0" y="80" width="16" height="16" fill="#565c65"/><rect x="16" y="80" width="16" height="16" fill="#9a9ea4"/><rect x="32" y="80" width="16" height="16" fill="#565c65"/><rect x="48" y="80" width="16" height="16" fill="#9a9ea4"/><rect x="64" y="80" width="16" height="16" fill="#565c65"/><rect x="80" y="80" width="16" height="16" fill="#9a9ea4"/><rect x="96" y="80" width="16" height="16" fill="#565c65"/><rect x="112" y="80" width="16" height="16" fill="#9a9ea4"/><rect x="128" y="80" width="16" height="16" fill="#565c65"/><rect x="144" y="80" width="16" height="16" fill="#9a9ea4"/><rect x="160" y="80" width="16" height="16" fill="#565c65"/><rect x="176" y="80" width="16" height="16" fill="#9a9ea4"/><rect x="192" y="80" width="16" height="16" fill="#565c65"/><rect x="208" y="80" width="16" height="16" fill="#9a9ea4"/><rect x="224" y="80" width="16" height="16" fill="#565c65"/><rect x="240" y="80" width="16" height="16" fill="#9a9ea4"/><rect x="256" y="80" width="16" height="16" fill="#565c65"/><rect x="272" y="80" width="16" height="16" fill="#9a9ea4"/><rect x="288" y="80" width="16" height="16" fill="#565c65"/><rect x="304" y="80" width="16" height="16" fill="#9a9ea4"/><rect x="320" y="80" width="16" height="16" fill="#565c65"/><rect x="336" y="80" width="16" height="16" fill="#9a9ea4"/><rect x="0" y="96" width="16" height="16" fill="#9a9ea4"/><rect x="16" y="96" width="16" height="16" fill="#565c65"/><rect x="32" y="96" width="16" height="16" fill="#9a9ea4"/><rect x="48" y="96" width="16" height="16" fill="#565c65"/><rect x="64" y="96" width="16" height="16" fill="#9a9ea4"/><rect x="80" y="96" width="16" height="16" fill="#565c65"/><rect x="96" y="96" width="16" height="16" fill="#9a9ea4"/><rect x="112" y="96" width="16" height="16" fill="#565c65"/><rect x="128" y="96" width="16" height="16" fill="#9a9ea4"/><rect x="144" y="96" width="16" height="16" fill="#565c65"/><rect x="160" y="96" width="16" height="16" fill="#9a9ea4"/><rect x="176" y="96" width="16" height="16" fill="#565c65"/><rect x="192" y="96" width="16" height="16" fill="#9a9ea4"/><rect x="208" y="96" width="16" height="16" fill="#565c65"/><rect x="224" y="96" width="16" height="16" fill="#9a9ea4"/><rect x="240" y="96" width="16" height="16" fill="#565c65"/><rect x="256" y="96" width="16" height="16" fill="#9a9ea4"/><rect x="272" y="96" width="16" height="16" fill="#565c65"/><rect x="288" y="96" width="16" height="16" fill="#9a9ea4"/><rect x="304" y="96" width="16" height="16" fill="#565c65"/><rect x="320" y="96" width="16" height="16" fill="#9a9ea4"/><rect x="336" y="96" width="16" height="16" fill="#565c65"/><rect x="0" y="112" width="16" height="16" fill="#565c65"/><rect x="16" y="112" width="16" height="16" fill="#9a9ea4"/><rect x="32" y="112" width="16" height="16" fill="#565c65"/><rect x="48" y="112" width="16" height="16" fill="#9a9ea4"/><rect x="64" y="112" width="16" height="16" fill="#565c65"/><rect x="80" y="112" width="16" height="16" fill="#9a9ea4"/><rect x="96" y="112" width="16" height="16" fill="#565c65"/><rect x="112" y="112" width="16" height="16" fill="#9a9ea4"/><rect x="128" y="112" width="16" height="16" fill="#565c65"/><rect x="144" y="112" width="16" height="16" fill="#9a9ea4"/><rect x="160" y="112" width="16" height="16" fill="#565c65"/><rect x="176" y="112" width="16" height="16" fill="#9a9ea4"/><rect x="192" y="112" width="16" height="16" fill="#565c65"/><rect x="208" y="112" width="16" height="16" fill="#9a9ea4"/><rect x="224" y="112" width="16" height="16" fill="#565c65"/><rect x="240" y="112" width="16" height="16" fill="#9a9ea4"/><rect x="256" y="112" width="16" height="16" fill="#565c65"/><rect x="272" y="112" width="16" height="16" fill="#9a9ea4"/><rect x="288" y="112" width="16" height="16" fill="#565c65"/><rect x="304" y="112" width="16" height="16" fill="#9a9ea4"/><rect x="320" y="112" width="16" height="16" fill="#565c65"/><rect x="336" y="112" width="16" height="16" fill="#9a9ea4"/><rect x="0" y="128" width="16" height="16" fill="#9a9ea4"/><rect x="16" y="128" width="16" height="16" fill="#565c65"/><rect x="32" y="128" width="16" height="16" fill="#9a9ea4"/><rect x="48" y="128" width="16" height="16" fill="#565c65"/><rect x="64" y="128" width="16" height="16" fill="#9a9ea4"/><rect x="80" y="128" width="16" height="16" fill="#565c65"/><rect x="96" y="128" width="16" height="16" fill="#9a9ea4"/><rect x="112" y="128" width="16" height="16" fill="#565c65"/><rect x="128" y="128" width="16" height="16" fill="#9a9ea4"/><rect x="144" y="128" width="16" height="16" fill="#565c65"/><rect x="160" y="128" width="16" height="16" fill="#9a9ea4"/><rect x="176" y="128" width="16" height="16" fill="#565c65"/><rect x="192" y="128" width="16" height="16" fill="#9a9ea4"/><rect x="208" y="128" width="16" height="16" fill="#565c65"/><rect x="224" y="128" width="16" height="16" fill="#9a9ea4"/><rect x="240" y="128" width="16" height="16" fill="#565c65"/><rect x="256" y="128" width="16" height="16" fill="#9a9ea4"/><rect x="272" y="128" width="16" height="16" fill="#565c65"/><rect x="288" y="128" width="16" height="16" fill="#9a9ea4"/><rect x="304" y="128" width="16" height="16" fill="#565c65"/><rect x="320" y="128" width="16" height="16" fill="#9a9ea4"/><rect x="336" y="128" width="16" height="16" fill="#565c65"/><rect x="0" y="144" width="16" height="16" fill="#565c65"/><rect x="16" y="144" width="16" height="16" fill="#9a9ea4"/><rect x="32" y="144" width="16" height="16" fill="#565c65"/><rect x="48" y="144" width="16" height="16" fill="#9a9ea4"/><rect x="64" y="144" width="16" height="16" fill="#565c65"/><rect x="80" y="144" width="16" height="16" fill="#9a9ea4"/><rect x="96" y="144" width="16" height="16" fill="#565c65"/><rect x="112" y="144" width="16" height="16" fill="#9a9ea4"/><rect x="128" y="144" width="16" height="16" fill="#565c65"/><rect x="144" y="144" width="16" height="16" fill="#9a9ea4"/><rect x="160" y="144" width="16" height="16" fill="#565c65"/><rect x="176" y="144" width="16" height="16" fill="#9a9ea4"/><rect x="192" y="144" width="16" height="16" fill="#565c65"/><rect x="208" y="144" width="16" height="16" fill="#9a9ea4"/><rect x="224" y="144" width="16" height="16" fill="#565c65"/><rect x="240" y="144" width="16" height="16" fill="#9a9ea4"/><rect x="256" y="144" width="16" height="16" fill="#565c65"/><rect x="272" y="144" width="16" height="16" fill="#9a9ea4"/><rect x="288" y="144" width="16" height="16" fill="#565c65"/><rect x="304" y="144" width="16" height="16" fill="#9a9ea4"/><rect x="320" y="144" width="16" height="16" fill="#565c65"/><rect x="336" y="144" width="16" height="16" fill="#9a9ea4"/></svg></div><div class="a" style="left:1635px;top:258px;width:150px;height:150px;background:#ffffff;"></div><div class="a" style="left:1533px;top:408px;width:355px;height:27px;background:#2b3340;"></div><div class="a t" style="top:411.0px;height:20px;line-height:20px;font-size:14.6px;color:#aeb1b5;left:1544px;">Shader</div><svg class="a" style="left:1693.0px;top:414.0px;" width="14" height="14" viewBox="0 0 16 16"><path d="M2.6 8A6 6 0 1 1 7.8 13.9" fill="none" stroke="#e0e0e0" stroke-width="1.9" stroke-linecap="round"/><path d="M-0.2 7.2L6.4 7.2L3.1 11.8Z" fill="#e0e0e0"/></svg><div class="a" style="left:1712px;top:408px;width:174px;height:27px;background:#1f232a;"></div><svg class="a" style="left:1718.0px;top:414.0px;" width="14" height="14" viewBox="0 0 16 16"><path d="M2 1H10L14 5V15H2Z" fill="#e0e0e0"/><path d="M10 1V5H14" fill="#bbbbbb"/><path d="M4 6.5H7M4 9H10M4 11.5H8" stroke="#ff5f5f" stroke-width="1.2"/><path d="M7.5 6.5H9M9 11.5H12" stroke="#5fb8ff" stroke-width="1.2"/><path d="M10.5 9H12" stroke="#8eef97" stroke-width="1.2"/></svg><div class="a t" style="top:411.0px;height:20px;line-height:20px;font-size:14.6px;color:#cdcfd2;left:1735px;">Player1Shader.gd</div><svg class="a" style="left:1866.0px;top:414.0px;" width="14" height="14" viewBox="0 0 16 16"><path d="M4.5 6.5L8 10L11.5 6.5" fill="none" stroke="#c8cacc" stroke-width="1.6"/></svg><div class="a" style="left:1533px;top:435px;width:355px;height:23px;background:#303744;"></div><svg class="a" style="left:1536.5px;top:440.5px;" width="13" height="13" viewBox="0 0 16 16"><path d="M4.3 6.3L8 10L11.7 6.3" fill="none" stroke="#8a8d93" stroke-width="2"/></svg><div class="a t" style="top:437.0px;height:20px;line-height:20px;font-size:14.6px;color:#cdcfd2;font-weight:bold;left:1549px;">Shader Parameters</div><div class="a t" style="top:462.0px;height:20px;line-height:20px;font-size:14.6px;color:#aeb1b5;left:1555px;">New Color Body</div><div class="a" style="left:1717px;top:458.5px;width:169px;height:27px;background:#1f232a;border-radius:3px;"></div><div class="a" style="left:1723px;top:463px;width:157px;height:18px;background:#3cbcfc;"></div><div class="a t" style="top:494.0px;height:20px;line-height:20px;font-size:14.6px;color:#aeb1b5;left:1555px;">Old Color Body</div><div class="a" style="left:1717px;top:490.5px;width:169px;height:27px;background:#1f232a;border-radius:3px;"></div><div class="a" style="left:1723px;top:495px;width:157px;height:18px;background:#3cbcfc;"></div><div class="a t" style="top:526.0px;height:20px;line-height:20px;font-size:14.6px;color:#aeb1b5;left:1555px;">New Color Eyes</div><div class="a" style="left:1717px;top:522.5px;width:169px;height:27px;background:#1f232a;border-radius:3px;"></div><div class="a" style="left:1723px;top:527px;width:157px;height:18px;background:#ffffff;"></div><div class="a t" style="top:558.0px;height:20px;line-height:20px;font-size:14.6px;color:#aeb1b5;left:1555px;">Old Color Eyes</div><div class="a" style="left:1717px;top:554.5px;width:169px;height:27px;background:#1f232a;border-radius:3px;"></div><div class="a" style="left:1723px;top:559px;width:157px;height:18px;background:#ffffff;"></div><div class="a t" style="top:590.0px;height:20px;line-height:20px;font-size:14.6px;color:#aeb1b5;left:1555px;">New Color 1</div><div class="a" style="left:1717px;top:586.5px;width:169px;height:27px;background:#1f232a;border-radius:3px;"></div><div class="a" style="left:1723px;top:591px;width:157px;height:18px;background:#f87858;"></div><div class="a t" style="top:622.0px;height:20px;line-height:20px;font-size:14.6px;color:#aeb1b5;left:1555px;">Old Color 1</div><div class="a" style="left:1717px;top:618.5px;width:169px;height:27px;background:#1f232a;border-radius:3px;"></div><div class="a" style="left:1723px;top:623px;width:157px;height:18px;background:#f87858;"></div><div class="a t" style="top:654.0px;height:20px;line-height:20px;font-size:14.6px;color:#aeb1b5;left:1555px;">New Color 2</div><div class="a" style="left:1717px;top:650.5px;width:169px;height:27px;background:#1f232a;border-radius:3px;"></div><div class="a" style="left:1723px;top:655px;width:157px;height:18px;background:#000000;"></div><div class="a t" style="top:686.0px;height:20px;line-height:20px;font-size:14.6px;color:#aeb1b5;left:1555px;">Old Color 2</div><div class="a" style="left:1717px;top:682.5px;width:169px;height:27px;background:#1f232a;border-radius:3px;"></div><div class="a" style="left:1723px;top:687px;width:157px;height:18px;background:#000000;"></div><div class="a t" style="top:717.0px;height:20px;line-height:20px;font-size:14.6px;color:#aeb1b5;left:1555px;">Precision</div><div class="a" style="left:1717px;top:715px;width:169px;height:26px;background:#1f232a;border-radius:3px;"></div><div class="a t" style="top:716.0px;height:20px;line-height:20px;font-size:14.6px;color:#cdcfd2;left:1733px;">0</div><div class="a" style="left:1723px;top:737px;width:153px;height:1px;background:#4d525a;"></div><div class="a" style="left:1723px;top:735px;width:3px;height:3px;background:#c8cacc;"></div><div class="a t" style="top:748.0px;height:20px;line-height:20px;font-size:14.6px;color:#aeb1b5;left:1555px;">Only Pick Main Color</div><div class="a" style="left:1717px;top:746px;width:169px;height:26px;background:#1f232a;border-radius:3px;"></div><div class="a t" style="top:748.0px;height:20px;line-height:20px;font-size:14.6px;color:#cdcfd2;left:1733px;">0</div><svg class="a" style="left:1864.5px;top:750.5px;" width="15" height="15" viewBox="0 0 16 16"><path d="M4.5 6L8 2.5L11.5 6M4.5 10L8 13.5L11.5 10" fill="none" stroke="#a9acb0" stroke-width="1.6"/></svg><svg class="a" style="left:1536.5px;top:776.5px;" width="13" height="13" viewBox="0 0 16 16"><path d="M6.2 4.3L9.9 8L6.2 11.7" fill="none" stroke="#8a8d93" stroke-width="2"/></svg><div class="a t" style="top:773.0px;height:20px;line-height:20px;font-size:14.6px;color:#cdcfd2;font-weight:bold;left:1549px;">Resource</div><div class="a t" style="top:773.0px;height:20px;line-height:20px;font-size:14.6px;color:#7e8288;right:35px;">(1 change)</div><div class="a t" style="top:805.0px;height:20px;line-height:20px;font-size:14.6px;color:#aeb1b5;left:1540px;">Use Parent Material</div><div class="a" style="left:1712px;top:802px;width:178px;height:27px;background:#232830;"></div><div class="a" style="left:1716px;top:808px;width:14px;height:14px;background:#494d55;border-radius:2px;"></div><div class="a t" style="top:805.0px;height:20px;line-height:20px;font-size:14.6px;color:#cdcfd2;left:1739px;">On</div><div class="a" style="left:1519px;top:829px;width:371px;height:21px;background:#3e434c;border-radius:2px;"></div><svg class="a" style="left:1674.5px;top:831.5px;" width="15" height="15" viewBox="0 0 16 16"><circle cx="8" cy="8" r="5.3" fill="none" stroke="#e0e0e0" stroke-width="2"/></svg><div class="a t" style="top:829.0px;height:20px;line-height:20px;font-size:14.6px;color:#cdcfd2;font-weight:bold;left:1696px;">Node</div><div class="a" style="left:1519px;top:850px;width:371px;height:44px;background:#262b33;"></div><svg class="a" style="left:1520.5px;top:854.5px;" width="13" height="13" viewBox="0 0 16 16"><path d="M6.2 4.3L9.9 8L6.2 11.7" fill="none" stroke="#8a8d93" stroke-width="2"/></svg><div class="a t" style="top:851.0px;height:20px;line-height:20px;font-size:14.6px;color:#cdcfd2;font-weight:bold;left:1533px;">Process</div><svg class="a" style="left:1520.5px;top:876.5px;" width="13" height="13" viewBox="0 0 16 16"><path d="M6.2 4.3L9.9 8L6.2 11.7" fill="none" stroke="#8a8d93" stroke-width="2"/></svg><div class="a t" style="top:873.0px;height:20px;line-height:20px;font-size:14.6px;color:#cdcfd2;font-weight:bold;left:1533px;">Editor Description</div><div class="a t" style="top:898.0px;height:20px;line-height:20px;font-size:14.6px;color:#aeb1b5;left:1527px;">Script</div><svg class="a" style="left:1687.0px;top:901.0px;" width="14" height="14" viewBox="0 0 16 16"><path d="M2.6 8A6 6 0 1 1 7.8 13.9" fill="none" stroke="#e0e0e0" stroke-width="1.9" stroke-linecap="round"/><path d="M-0.2 7.2L6.4 7.2L3.1 11.8Z" fill="#e0e0e0"/></svg><svg class="a" style="left:1712.0px;top:901.0px;" width="14" height="14" viewBox="0 0 16 16"><circle cx="8" cy="8" r="4.8" fill="#e0e0e0"/><path d="M8 1V15M1 8H15M3 3L13 13M13 3L3 13" stroke="#e0e0e0" stroke-width="2.6"/><circle cx="8" cy="8" r="2" fill="#21252d"/></svg><div class="a t" style="top:898.0px;height:20px;line-height:20px;font-size:14.6px;color:#cdcfd2;left:1746px;">Character1.gd</div><svg class="a" style="left:1870.0px;top:901.0px;" width="14" height="14" viewBox="0 0 16 16"><path d="M4.5 6.5L8 10L11.5 6.5" fill="none" stroke="#c8cacc" stroke-width="1.6"/></svg><div class="a" style="left:1615px;top:926px;width:179px;height:28px;background:#2a2f37;border-radius:3px;"></div><svg class="a" style="left:1621.5px;top:932.5px;" width="15" height="15" viewBox="0 0 16 16"><path d="M8 2V14M2 8H14" stroke="#e0e0e0" stroke-width="2"/></svg><div class="a t" style="top:930.0px;height:20px;line-height:20px;font-size:14.6px;color:#cdcfd2;left:1669px;">Add Metadata</div><div class="a" style="left:1897px;top:132px;width:6px;height:818px;background:#2e333b;border-radius:3px;"></div><div class="a" style="left:1897px;top:244px;width:6px;height:706px;background:#6c7075;border-radius:3px;"></div>
</body></html>
